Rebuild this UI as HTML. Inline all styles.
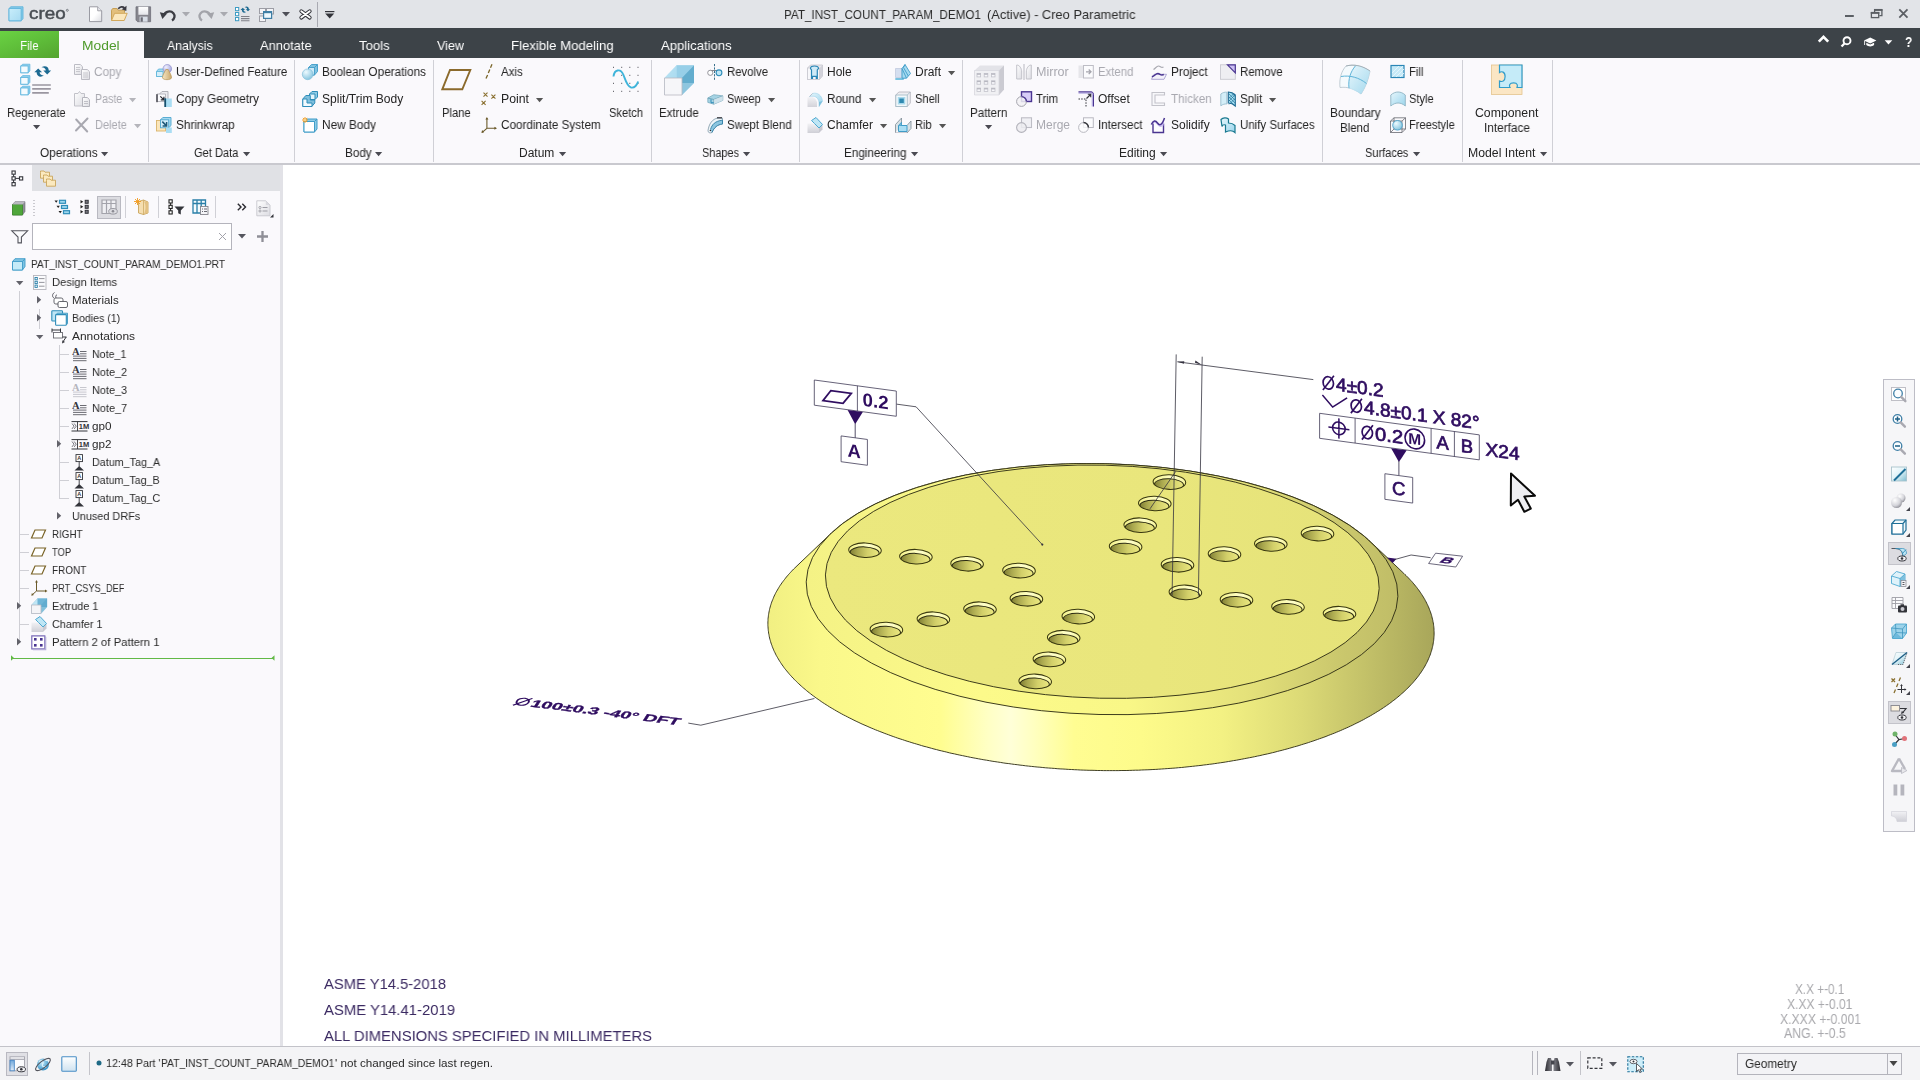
<!DOCTYPE html>
<html><head><meta charset="utf-8"><title>Creo Parametric</title>
<style>
html,body{margin:0;padding:0;}
body{width:1920px;height:1080px;position:relative;overflow:hidden;background:#ffffff;font-family:"Liberation Sans", sans-serif;}
.t{position:absolute;white-space:pre;line-height:20px;height:20px;transform-origin:0 50%;font-family:"Liberation Sans", sans-serif;will-change:transform;}
svg{overflow:visible}
</style></head><body>
<div style="position:absolute;left:0px;top:0px;width:1920px;height:28px;background:#e2e4e8;"></div>
<div style="position:absolute;left:0px;top:28px;width:1920px;height:30px;background:#3d4348;"></div>
<div style="position:absolute;left:0px;top:31px;width:59px;height:27px;background:linear-gradient(160deg,#6ad243 0%,#5fbf3a 45%,#54a42f 100%);"></div>
<div style="position:absolute;left:59px;top:31px;width:85px;height:27px;background:#faf9fc;"></div>
<div style="position:absolute;left:0px;top:58px;width:1920px;height:106px;background:#faf9fc;"></div>
<div style="position:absolute;left:0px;top:163px;width:1920px;height:2px;background:#c9c9cf;"></div>
<div style="position:absolute;left:0px;top:165px;width:280px;height:882px;background:#faf9fc;"></div>
<div style="position:absolute;left:0px;top:165px;width:280px;height:26px;background:#e0e1e5;"></div>
<div style="position:absolute;left:0px;top:165px;width:32px;height:26px;background:#faf9fc;"></div>
<div style="position:absolute;left:280px;top:165px;width:3px;height:882px;background:#e2e2e7;"></div>
<div style="position:absolute;left:283px;top:165px;width:1637px;height:882px;background:#ffffff;"></div>
<div style="position:absolute;left:0px;top:1047px;width:1920px;height:33px;background:#f4f4f6;"></div>
<div style="position:absolute;left:0px;top:1046px;width:1920px;height:1.2px;background:#c3c3c9;"></div>
<svg style="position:absolute;left:66px;top:9px;" width="3" height="3" viewBox="0 0 3 3"><circle cx="1.3" cy="1.3" r="1" fill="none" stroke="#5a5f65" stroke-width="0.7"/></svg>
<svg style="position:absolute;left:1840px;top:6px;" width="70" height="18" viewBox="0 0 70 18"><path d="M5 10h8.800" stroke="#5b5f64" stroke-width="2"/>
<path d="M34.600 6.600v-2.800h7.300v5.800h-2.600" fill="none" stroke="#5b5f64" stroke-width="1.300"/><path d="M34 3.900h8.500" stroke="#5b5f64" stroke-width="1.900"/>
<rect x="31.400" y="6.600" width="7.300" height="5" fill="none" stroke="#5b5f64" stroke-width="1.300"/><path d="M30.800 6.900h8.500" stroke="#5b5f64" stroke-width="1.900"/>
<path d="M59.300 3.400l8.200 8.200M67.500 3.400l-8.200 8.200" stroke="#5b5f64" stroke-width="1.800"/></svg>
<svg style="position:absolute;left:1810px;top:32px;" width="110" height="22" viewBox="0 0 110 22"><path d="M8.800 9.600l4.700-4.700 4.700 4.700" fill="none" stroke="#fff" stroke-width="2.700"/>
<circle cx="37" cy="8.700" r="3.500" fill="none" stroke="#fff" stroke-width="1.900"/><path d="M34.700 11.300l-3.200 3.200" stroke="#fff" stroke-width="2.300"/>
<path d="M54 8.500l6.200-2.900 6.200 2.900-6.200 2.900z" fill="#fff"/><path d="M56.300 10.800v2.300c1.900 1.700 5.900 1.700 7.800 0v-2.300l-3.900 1.800z" fill="#fff"/><path d="M54.600 8.800v4.200" stroke="#fff" stroke-width="0.900"/>
<path d="M74.700 8.200h7.600l-3.800 4.200z" fill="#fff"/></svg>
<svg style="position:absolute;left:8px;top:6px;" width="17" height="17" viewBox="0 0 17 17"><defs><linearGradient id="cub" x1="0" y1="0" x2="1" y2="1"><stop offset="0" stop-color="#c9eefb"/><stop offset="1" stop-color="#a6daf1"/></linearGradient></defs>
<path d="M1 2.500L2.900 0.800H15v11.800L13.200 14.800H1z" fill="#86cbe9" stroke="#5fb4db" stroke-width="0.900"/>
<path d="M1 2.500h12.200v12.300H1z" fill="url(#cub)" stroke="#62b6dc" stroke-width="0.900"/></svg>
<svg style="position:absolute;left:88px;top:6px;" width="16" height="17" viewBox="0 0 16 17"><defs><linearGradient id="pg" x1="0" y1="0" x2="1" y2="1"><stop offset="0.5" stop-color="#ffffff"/><stop offset="1" stop-color="#dcdde2"/></linearGradient></defs>
<path d="M1.5 0.8h8.2l4 4v10.8H1.5z" fill="url(#pg)" stroke="#9a9ba3" stroke-width="1"/>
<path d="M9.7 0.8v4h4" fill="#e9e9ee" stroke="#9a9ba3" stroke-width="0.9"/></svg>
<svg style="position:absolute;left:110px;top:5px;" width="19" height="18" viewBox="0 0 19 18"><path d="M1.5 15.5V5.2l1.2-1.7h4.2l1.2 1.7h6.4v2.6" fill="#e3bf7c" stroke="#c79f55" stroke-width="1"/>
<path d="M1.5 15.5L4.6 8.3h12.6l-3 7.2z" fill="#fbe7bd" stroke="#d2a85b" stroke-width="1"/>
<path d="M8.2 3.8c2-2.4 4.6-2.6 6.3-0.9" fill="none" stroke="#3a3a42" stroke-width="1.7"/>
<path d="M16.6 0.8l-0.3 5.2-4.6-1.7z" fill="#3a3a42"/></svg>
<svg style="position:absolute;left:135px;top:6px;" width="17" height="17" viewBox="0 0 17 17"><defs><linearGradient id="fl" x1="0" y1="0" x2="0" y2="1"><stop offset="0" stop-color="#ffffff"/><stop offset="1" stop-color="#e4e5ea"/></linearGradient></defs>
<path d="M1 0.8h14.6v14.9H2.6L1 14.1z" fill="#85858d" stroke="#6f6f78" stroke-width="0.8"/>
<rect x="3.4" y="0.8" width="9.8" height="8" fill="url(#fl)"/>
<rect x="4.6" y="10.6" width="8" height="5.1" fill="#d7dde6"/>
<rect x="5.6" y="11.3" width="2.2" height="4.4" fill="#6a6a74"/></svg>
<svg style="position:absolute;left:159px;top:8px;" width="18" height="14" viewBox="0 0 18 14"><path d="M4.2 7.6C6.5 3 11.8 2.2 14.4 5.2c2 2.3 1.3 5.6-1.4 7.2" fill="none" stroke="#3c3d44" stroke-width="2.3"/>
<path d="M0.8 4.2l7.2 1.6-4.6 5.2z" fill="#3c3d44"/></svg>
<svg style="position:absolute;left:181.5px;top:12px;" width="8" height="5" viewBox="0 0 8 5"><path d="M0 0h8L4 4.6z" fill="#a9aab0"/></svg>
<svg style="position:absolute;left:197px;top:8px;" width="18" height="14" viewBox="0 0 18 14"><path d="M13.8 7.6C11.5 3 6.2 2.2 3.6 5.2c-2 2.3-1.3 5.6 1.4 7.2" fill="none" stroke="#a3a4aa" stroke-width="2.3"/>
<path d="M17.2 4.2l-7.2 1.6 4.6 5.2z" fill="#a3a4aa"/></svg>
<svg style="position:absolute;left:219.5px;top:12px;" width="8" height="5" viewBox="0 0 8 5"><path d="M0 0h8L4 4.6z" fill="#a9aab0"/></svg>
<svg style="position:absolute;left:234px;top:5px;" width="17" height="17" viewBox="0 0 17 17"><g fill="#fff" stroke="#3e9cc4" stroke-width="1"><rect x="1.500" y="2.500" width="3.200" height="3.200"/><rect x="1.500" y="7.500" width="3.200" height="3.200"/><rect x="1.500" y="12.500" width="3.200" height="3.200"/></g>
<path d="M7 11.500h8.500M7 13.600h8.500M7 15.700h8.500" stroke="#808088" stroke-width="1.100"/>
<g transform="translate(-1.800 0.300) scale(0.580)"><path d="M21.500 3.300C24.500 1 28.800 2.200 28.800 6.600h2.300l-3.900 3.800-3.900-3.800h2.500c0-1.900-1.700-3.300-4.300-3.300z" fill="#1d6a92"/>
<path transform="rotate(180 22.700 7.400)" d="M21.500 3.300C24.500 1 28.800 2.200 28.800 6.600h2.300l-3.900 3.800-3.900-3.800h2.500c0-1.900-1.700-3.300-4.300-3.300z" fill="#1d6a92"/></g></svg>
<svg style="position:absolute;left:258px;top:7px;" width="18" height="16" viewBox="0 0 18 16"><g fill="#f4f4f7" stroke="#9c9da5" stroke-width="1"><rect x="8.5" y="1.5" width="7" height="5.5"/><rect x="1.5" y="1.5" width="6" height="5"/><rect x="1.5" y="9" width="6" height="5.5"/></g>
<rect x="5.6" y="4.6" width="8" height="6.8" fill="#eef8fd" stroke="#3f7fa6" stroke-width="1.2"/><rect x="5.6" y="4.6" width="8" height="1.6" fill="#3f7fa6"/></svg>
<svg style="position:absolute;left:281.5px;top:12px;" width="8" height="5" viewBox="0 0 8 5"><path d="M0 0h8L4 4.6z" fill="#4e4f57"/></svg>
<svg style="position:absolute;left:299px;top:9px;" width="13" height="11" viewBox="0 0 13 11"><path d="M2.300 2.200l8.400 6.400M10.700 2.200l-8.400 6.400" stroke="#33343a" stroke-width="3.900" stroke-linecap="round"/>
<path d="M2.300 2.200l8.400 6.400M10.700 2.200l-8.400 6.400" stroke="#ffffff" stroke-width="1.900" stroke-linecap="round"/></svg>
<div style="position:absolute;left:317px;top:2px;width:1px;height:25px;background:#a9aab2;"></div>
<svg style="position:absolute;left:324.5px;top:10.5px;" width="10" height="8" viewBox="0 0 10 8"><path d="M0 0.6h9.4" stroke="#33343a" stroke-width="1.2"/><path d="M0.2 2.6h9L4.7 7.6z" fill="#33343a"/></svg>
<div style="position:absolute;left:147.8px;top:60px;width:1px;height:102px;background:#d0d0d6;"></div>
<div style="position:absolute;left:294px;top:60px;width:1px;height:102px;background:#d0d0d6;"></div>
<div style="position:absolute;left:432.8px;top:60px;width:1px;height:102px;background:#d0d0d6;"></div>
<div style="position:absolute;left:651.3px;top:60px;width:1px;height:102px;background:#d0d0d6;"></div>
<div style="position:absolute;left:799.2px;top:60px;width:1px;height:102px;background:#d0d0d6;"></div>
<div style="position:absolute;left:961.8px;top:60px;width:1px;height:102px;background:#d0d0d6;"></div>
<div style="position:absolute;left:1322.2px;top:60px;width:1px;height:102px;background:#d0d0d6;"></div>
<div style="position:absolute;left:1462.2px;top:60px;width:1px;height:102px;background:#d0d0d6;"></div>
<div style="position:absolute;left:1552.2px;top:60px;width:1px;height:102px;background:#d0d0d6;"></div>
<svg style="position:absolute;left:100.7px;top:151.5px;" width="7.2" height="4.4" viewBox="0 0 7.2 4.4"><path d="M0 0h7.200L3.600 4.300z" fill="#4a4a52"/></svg>
<svg style="position:absolute;left:242.70000000000002px;top:151.5px;" width="7.2" height="4.4" viewBox="0 0 7.2 4.4"><path d="M0 0h7.200L3.600 4.300z" fill="#4a4a52"/></svg>
<svg style="position:absolute;left:375.4px;top:151.5px;" width="7.2" height="4.4" viewBox="0 0 7.2 4.4"><path d="M0 0h7.200L3.600 4.300z" fill="#4a4a52"/></svg>
<svg style="position:absolute;left:558.6999999999999px;top:151.5px;" width="7.2" height="4.4" viewBox="0 0 7.2 4.4"><path d="M0 0h7.200L3.600 4.300z" fill="#4a4a52"/></svg>
<svg style="position:absolute;left:742.6999999999999px;top:151.5px;" width="7.2" height="4.4" viewBox="0 0 7.2 4.4"><path d="M0 0h7.200L3.600 4.300z" fill="#4a4a52"/></svg>
<svg style="position:absolute;left:910.6999999999999px;top:151.5px;" width="7.2" height="4.4" viewBox="0 0 7.2 4.4"><path d="M0 0h7.200L3.600 4.300z" fill="#4a4a52"/></svg>
<svg style="position:absolute;left:1159.7px;top:151.5px;" width="7.2" height="4.4" viewBox="0 0 7.2 4.4"><path d="M0 0h7.200L3.600 4.300z" fill="#4a4a52"/></svg>
<svg style="position:absolute;left:1412.7px;top:151.5px;" width="7.2" height="4.4" viewBox="0 0 7.2 4.4"><path d="M0 0h7.200L3.600 4.300z" fill="#4a4a52"/></svg>
<svg style="position:absolute;left:1539.7px;top:151.5px;" width="7.2" height="4.4" viewBox="0 0 7.2 4.4"><path d="M0 0h7.200L3.600 4.300z" fill="#4a4a52"/></svg>
<svg style="position:absolute;left:32.9px;top:125.1px;" width="7.2" height="4.4" viewBox="0 0 7.2 4.4"><path d="M0 0h7.200L3.600 4.300z" fill="#4a4a52"/></svg>
<svg style="position:absolute;left:128.8px;top:97.8px;" width="7.2" height="4.4" viewBox="0 0 7.2 4.4"><path d="M0 0h7.200L3.600 4.300z" fill="#b5b5bb"/></svg>
<svg style="position:absolute;left:133.9px;top:123.8px;" width="7.2" height="4.4" viewBox="0 0 7.2 4.4"><path d="M0 0h7.200L3.600 4.300z" fill="#b5b5bb"/></svg>
<svg style="position:absolute;left:535.6999999999999px;top:97.8px;" width="7.2" height="4.4" viewBox="0 0 7.2 4.4"><path d="M0 0h7.200L3.600 4.300z" fill="#555"/></svg>
<svg style="position:absolute;left:768.1px;top:97.8px;" width="7.2" height="4.4" viewBox="0 0 7.2 4.4"><path d="M0 0h7.200L3.600 4.300z" fill="#555"/></svg>
<svg style="position:absolute;left:868.6999999999999px;top:97.8px;" width="7.2" height="4.4" viewBox="0 0 7.2 4.4"><path d="M0 0h7.200L3.600 4.300z" fill="#555"/></svg>
<svg style="position:absolute;left:880.1px;top:123.8px;" width="7.2" height="4.4" viewBox="0 0 7.2 4.4"><path d="M0 0h7.200L3.600 4.300z" fill="#555"/></svg>
<svg style="position:absolute;left:947.6999999999999px;top:70.8px;" width="7.2" height="4.4" viewBox="0 0 7.2 4.4"><path d="M0 0h7.200L3.600 4.300z" fill="#555"/></svg>
<svg style="position:absolute;left:938.6999999999999px;top:123.8px;" width="7.2" height="4.4" viewBox="0 0 7.2 4.4"><path d="M0 0h7.200L3.600 4.300z" fill="#555"/></svg>
<svg style="position:absolute;left:984.6999999999999px;top:125.1px;" width="7.2" height="4.4" viewBox="0 0 7.2 4.4"><path d="M0 0h7.200L3.600 4.300z" fill="#4a4a52"/></svg>
<svg style="position:absolute;left:1269.4px;top:97.8px;" width="7.2" height="4.4" viewBox="0 0 7.2 4.4"><path d="M0 0h7.200L3.600 4.300z" fill="#555"/></svg>
<svg style="position:absolute;left:0px;top:0px;" width="0" height="0" viewBox="0 0 0 0"><defs>
<linearGradient id="gb1" x1="0" y1="0" x2="1" y2="1"><stop offset="0" stop-color="#e6f6fc"/><stop offset="1" stop-color="#9bd5ec"/></linearGradient>
<linearGradient id="gb2" x1="0" y1="0" x2="0" y2="1"><stop offset="0" stop-color="#d9f1fb"/><stop offset="1" stop-color="#7fc4e2"/></linearGradient>
<linearGradient id="gg1" x1="0" y1="0" x2="1" y2="1"><stop offset="0" stop-color="#ffffff"/><stop offset="1" stop-color="#dcdce2"/></linearGradient>
<linearGradient id="gg2" x1="0" y1="0" x2="0" y2="1"><stop offset="0" stop-color="#f2f2f5"/><stop offset="1" stop-color="#cfcfd6"/></linearGradient>
<radialGradient id="gs1" cx="0.35" cy="0.3" r="0.8"><stop offset="0" stop-color="#eefaff"/><stop offset="1" stop-color="#7cc0dc"/></radialGradient>
<radialGradient id="gs2" cx="0.35" cy="0.3" r="0.8"><stop offset="0" stop-color="#f0f0ff"/><stop offset="1" stop-color="#9a9ad8"/></radialGradient>
<linearGradient id="gt1" x1="0" y1="0" x2="1" y2="0"><stop offset="0" stop-color="#f7e6c4"/><stop offset="1" stop-color="#c9a86c"/></linearGradient>
</defs></svg>
<svg style="position:absolute;left:20px;top:64px;" width="32" height="32" viewBox="0 0 32 32"><path d="M0.800 2l1.800 -1.800h7.300v6.800l-1.800 1.800h-7.300z" fill="#8fd0ec" stroke="#58b2dc" stroke-width="0.700"/><rect x="0.800" y="2" width="7.300" height="6.800" fill="#f4fbfe" stroke="#58b2dc" stroke-width="0.800"/><path d="M0.800 13.4l1.800 -1.800h7.300v6.800l-1.800 1.800h-7.300z" fill="#8fd0ec" stroke="#58b2dc" stroke-width="0.700"/><rect x="0.800" y="13.4" width="7.300" height="6.800" fill="#f4fbfe" stroke="#58b2dc" stroke-width="0.800"/><path d="M0.800 24l1.800 -1.800h7.300v6.800l-1.800 1.800h-7.300z" fill="#8fd0ec" stroke="#58b2dc" stroke-width="0.700"/><rect x="0.800" y="24" width="7.300" height="6.800" fill="#f4fbfe" stroke="#58b2dc" stroke-width="0.800"/>
<path d="M12.200 21h18.600M12.200 24.900h18.600M12.200 28.800h16.600" stroke="#9a96a0" stroke-width="1.700"/>
<path d="M21.500 3.300C24.500 1 28.800 2.200 28.800 6.600h2.300l-3.900 3.800-3.900-3.800h2.500c0-1.900-1.700-3.300-4.300-3.300z" fill="#1d6a92"/>
<path transform="rotate(180 22.700 7.400)" d="M21.500 3.300C24.500 1 28.800 2.200 28.800 6.600h2.300l-3.900 3.800-3.900-3.800h2.500c0-1.900-1.700-3.300-4.300-3.300z" fill="#1d6a92"/></svg>
<svg style="position:absolute;left:74px;top:63.7px;" width="16" height="16" viewBox="0 0 16 16"><g fill="url(#gg1)" stroke="#bcbcc4" stroke-width="1"><path d="M0.5 0.5h5.8l2.2 2.2v7.8h-8z"/><path d="M7.5 5.5h5.8l2.2 2.2v7.8h-8z"/></g>
<path d="M2 3.5h4M2 5.5h4M2 7.5h4M9 9h5M9 11h5M9 13h5" stroke="#c8c8ce" stroke-width="1"/></svg>
<svg style="position:absolute;left:74px;top:90.7px;" width="16" height="16" viewBox="0 0 16 16"><path d="M0.5 2.5h3.5l1.5-2 1.5 2h3.500v12.500h-10z" fill="url(#gg1)" stroke="#c2c2c9" stroke-width="1"/>
<path d="M8.500 6.500h4.800l2.200 2.200v6.800h-7z" fill="url(#gg1)" stroke="#b4b4bc" stroke-width="1"/><path d="M10 10.500h4M10 12.500h4" stroke="#c0c0c7" stroke-width="1"/></svg>
<svg style="position:absolute;left:75px;top:116.7px;" width="14" height="16" viewBox="0 0 14 16"><path d="M1.200 2.500l11 12M12.500 1.500l-11.500 12" stroke="#a8a8b0" stroke-width="2" stroke-linecap="round"/></svg>
<svg style="position:absolute;left:155.5px;top:63.7px;" width="16" height="16" viewBox="0 0 16 16"><path d="M0.500 7.500l2-2.500h6.500v5l-2 2.500h-6.500z" fill="#a5daf0" stroke="#5ab2d8" stroke-width="0.8"/><path d="M0.500 7.500h6.500v5h-6.500z" fill="#d5eefa" stroke="#5ab2d8" stroke-width="0.8"/>
<circle cx="11.300" cy="4.800" r="4.300" fill="url(#gs2)" stroke="#8484c4" stroke-width="0.600"/>
<path d="M9.800 5.500c-1.300 2.800-3.600 6.200-3.300 8.500 1 2.200 8 2.200 9 0 0.300-2.300-2-5.700-3.300-8.500z" fill="url(#gt1)" stroke="#b89452" stroke-width="0.700"/></svg>
<svg style="position:absolute;left:155.5px;top:90.7px;" width="16" height="16" viewBox="0 0 16 16"><path d="M3.500 3l2.500-2.500h6v7.500l-2.500 2.500" fill="#ececf0" stroke="#a9a9b1" stroke-width="0.9"/><path d="M1 3h8.500v7.500h-8.500z" fill="#fbfbfd" stroke="#b2b2ba" stroke-width="0.9"/>
<rect x="0.300" y="3.200" width="1.400" height="8" fill="#3e3e46"/>
<path d="M4.300 5.300l3.400 3.400M7.900 5.800v3.100h-3.100" stroke="#2a2a32" stroke-width="1.200" fill="none"/>
<rect x="9.800" y="7.500" width="6" height="8.500" fill="#a9ddf3"/><rect x="8.300" y="7.300" width="1.800" height="8.700" fill="#17506e"/></svg>
<svg style="position:absolute;left:155.5px;top:116.7px;" width="16" height="16" viewBox="0 0 16 16"><rect x="0.500" y="3.500" width="9" height="10.500" fill="#fbe6bb" stroke="#d9b36b" stroke-width="0.900"/>
<path d="M4.500 2.800l2.300-2.300h8.200v8l-2.300 2.300" fill="#a5daf0" stroke="#4ea6cf" stroke-width="0.900"/><rect x="4.500" y="2.800" width="8.200" height="8" fill="#d3eefa" stroke="#4ea6cf" stroke-width="0.900"/>
<path d="M6.300 4.600l4 4M10.600 5v4h-4" stroke="#1d5878" stroke-width="1.500" fill="none"/>
<rect x="10" y="10.500" width="5.800" height="5.500" fill="#a9ddf3"/></svg>
<svg style="position:absolute;left:302px;top:63.7px;" width="16" height="16" viewBox="0 0 16 16"><path d="M6.500 3.500l3-3h6v7l-3 3.500h-6z" fill="#7fc2e0" stroke="#3f9cc8" stroke-width="0.900"/><path d="M6.500 3.500h6v7.500h-6z" fill="#cfeaf7" stroke="#3f9cc8" stroke-width="0.900"/><path d="M12.500 3.500l3-3" stroke="#3f9cc8" stroke-width="0.900"/>
<circle cx="5.700" cy="10.300" r="5.400" fill="url(#gs1)" stroke="#7ab9d6" stroke-width="0.600"/></svg>
<svg style="position:absolute;left:302px;top:90.7px;" width="16" height="16" viewBox="0 0 16 16"><path d="M7.500 3l2.500-2.500h5.500v5.500l-2.500 2.500h-5.500z" fill="#8ecbe6" stroke="#2f8db9" stroke-width="1"/><path d="M7.500 3h5.500v5.500h-5.500z" fill="#e4f5fc" stroke="#2f8db9" stroke-width="1"/>
<path d="M0.800 8l3-3.500h4.500v4.500h4.500v3l-3 3.500h-9z" fill="#7fbfdc" stroke="#2f8db9" stroke-width="1"/>
<path d="M0.800 8h4.200v4h5v3.500h-9.200z" fill="#f2fafe" stroke="#2f8db9" stroke-width="1"/></svg>
<svg style="position:absolute;left:302px;top:116.7px;" width="16" height="16" viewBox="0 0 16 16"><path d="M2 4.500l2.500-2.500h10.500v10l-2.500 3h-10.500z" fill="#8ecbe6" stroke="#3f9cc8" stroke-width="1"/><path d="M2 4.500h10.500v10.500h-10.500z" fill="#ffffff" stroke="#3f9cc8" stroke-width="1"/><path d="M12.500 4.500l2.500-2.500" stroke="#3f9cc8"/>
<path d="M3 0v6M0 3h6M0.900 0.900l4.200 4.200M5.100 0.900l-4.200 4.200" stroke="#f29a1e" stroke-width="0.900"/><circle cx="3" cy="3" r="1.300" fill="#fff3c9" stroke="#f29a1e" stroke-width="0.600"/></svg>
<svg style="position:absolute;left:441px;top:65px;" width="32" height="28" viewBox="0 0 32 28"><path d="M9 5h20.300l-8 19.300h-20z" fill="none" stroke="#8b6a2c" stroke-width="1.900" stroke-linejoin="miter"/></svg>
<svg style="position:absolute;left:481px;top:63.7px;" width="16" height="16" viewBox="0 0 16 16"><path d="M11 0.300l-1.500 3.400M8.800 5.600l-1.500 3.400M6.600 10.900l-1.600 3.600" stroke="#7a6428" stroke-width="1.300"/></svg>
<svg style="position:absolute;left:481px;top:90.7px;" width="16" height="16" viewBox="0 0 16 16"><g stroke="#8a7030" stroke-width="1.100"><path d="M2.500 1.700l4 4M6.500 1.700l-4 4M10.400 3.700l4 4M14.400 3.700l-4 4M0.600 9.800l4 4M4.600 9.800l-4 4"/></g></svg>
<svg style="position:absolute;left:481px;top:116.7px;" width="16" height="16" viewBox="0 0 16 16"><g stroke="#6b5a2a" stroke-width="1.100" fill="none"><path d="M5.900 1.500v9.800h9M5.900 11.300l-4.700 4"/></g><path d="M5.900 0l-1.500 2.600h3zM16 11.300l-2.600-1.500v3zM0.400 16l0.700-2.900 2 2.200z" fill="#6b5a2a"/></svg>
<svg style="position:absolute;left:610px;top:64px;" width="32" height="32" viewBox="0 0 32 32"><rect x="3.0" y="2.8" width="1" height="1" fill="#4a4a52"/><rect x="3.0" y="10.8" width="1" height="1" fill="#4a4a52"/><rect x="3.0" y="18.8" width="1" height="1" fill="#4a4a52"/><rect x="3.0" y="26.8" width="1" height="1" fill="#4a4a52"/><rect x="11.2" y="2.8" width="1" height="1" fill="#4a4a52"/><rect x="11.2" y="10.8" width="1" height="1" fill="#4a4a52"/><rect x="11.2" y="18.8" width="1" height="1" fill="#4a4a52"/><rect x="11.2" y="26.8" width="1" height="1" fill="#4a4a52"/><rect x="19.3" y="2.8" width="1" height="1" fill="#4a4a52"/><rect x="19.3" y="10.8" width="1" height="1" fill="#4a4a52"/><rect x="19.3" y="18.8" width="1" height="1" fill="#4a4a52"/><rect x="19.3" y="26.8" width="1" height="1" fill="#4a4a52"/><rect x="27.5" y="2.8" width="1" height="1" fill="#4a4a52"/><rect x="27.5" y="10.8" width="1" height="1" fill="#4a4a52"/><rect x="27.5" y="18.8" width="1" height="1" fill="#4a4a52"/><rect x="27.5" y="26.8" width="1" height="1" fill="#4a4a52"/><path d="M3.500 12.500c0.800-7 7-8.600 10 -1.500 2 5 3.500 11.500 7.600 12.500 3.500 0.700 6.200-2.700 7-6" fill="none" stroke="#3fb4da" stroke-width="1.900"/></svg>
<svg style="position:absolute;left:663px;top:64px;" width="32" height="32" viewBox="0 0 32 32"><path d="M1.500 14l12-12.500h17.500v17.500l-12 12h-17.500z" fill="#bfe6f5"/>
<path d="M13.500 1.500h17.500v17.500h-17.500z" fill="#6fb5d6"/><path d="M13.500 1.500v17.500l-12 12v-17z" fill="url(#gb1)"/>
<path d="M13.500 19h17.500l-12 12h-17.500z" fill="#cfeefa"/><path d="M13.500 1.500l17.500 0-12 12.500h-17.500z" fill="#a8daf0" opacity="0.7"/>
<path d="M19 14v17l12-12v-17.500z" fill="#5aa6c9" opacity="0.550"/>
<path d="M1.500 14h17.500v17h-17.500z" fill="#f6f6f9" stroke="#b9b9c1" stroke-width="0.800"/></svg>
<svg style="position:absolute;left:707px;top:63.7px;" width="16" height="16" viewBox="0 0 16 16"><path d="M7.500 0v16" stroke="#23607f" stroke-width="0.900" stroke-dasharray="2.200 1.200"/><path d="M3 6.500h10" stroke="#6a6a72" stroke-width="0.800"/>
<circle cx="3.300" cy="8.800" r="2.600" fill="#fff" stroke="#8a8a92" stroke-width="0.900"/><circle cx="12" cy="8.800" r="2.900" fill="#bfe6f5" stroke="#2f8db9" stroke-width="1.100"/></svg>
<svg style="position:absolute;left:707px;top:90.7px;" width="16" height="16" viewBox="0 0 16 16"><path d="M0.800 7l6-3.300 9 1.200v4.500l-9 3.800-6-1.800z" fill="#a5d3e4" stroke="#6fa3b8" stroke-width="0.700"/><path d="M0.800 7l6 1.500 9-3.600M6.800 8.500v4.700" stroke="#5b93aa" stroke-width="0.700" fill="none"/>
<path d="M4 8.300v3.400h3.200" stroke="#2f8db9" fill="none" stroke-width="1"/><path d="M6.800 8.500l9-3.600v4.500l-9 3.800z" fill="#d9e6ec" opacity="0.800"/></svg>
<svg style="position:absolute;left:707px;top:116.7px;" width="16" height="16" viewBox="0 0 16 16"><path d="M1 13.500c1-6.500 4-11.500 10-12.500l4.500 0.200v5.800c-5 0.500-8.500 3.500-10.500 8.500-2 1-4.300 0-4-2z" fill="#eef5f9" stroke="#7d97a6" stroke-width="0.800"/>
<path d="M3.500 12.500c1.500-5 4.500-8.500 12-9.300v3.800c-5 0.500-8.500 3.500-10.500 8.500" fill="#8cc6e0" stroke="#2f7fa6" stroke-width="0.900"/><circle cx="3.400" cy="13.500" r="0.800" fill="#33343a"/><path d="M10 0.800h5" stroke="#33343a" stroke-width="1.200"/></svg>
<svg style="position:absolute;left:807px;top:63.7px;" width="16" height="16" viewBox="0 0 16 16"><path d="M0.500 4l3-3h12v11l-3 3.500h-12z" fill="#e9e9ee" stroke="#bdbdc6" stroke-width="0.700"/><path d="M12.500 4.300l3-3.300v11l-3 3.500z" fill="#d2d2da"/><path d="M0.500 4h12v11.500h-12z" fill="#f7f7fa" stroke="#c4c4cc" stroke-width="0.700"/>
<path d="M3.500 4.500c0-2 1.500-2.500 4-2.500s4 0.500 4 2.500l-1.200 1.500v8.500h-1v-2.200h-3.800v2.200h-1v-8.500z" fill="#cfeaf7" stroke="#2a86b6" stroke-width="1.200"/></svg>
<svg style="position:absolute;left:807px;top:90.7px;" width="16" height="16" viewBox="0 0 16 16"><path d="M0.500 6.500c4-1.500 7.500-0.500 9.500 4.500v5h-9.500z" fill="url(#gg2)" opacity="0.900"/>
<path d="M5.500 2.500c5-1.500 9.500 2 10 7.500l-3.500 5.500v-4.500c-1-5-4-6.500-9.500-5.500z" fill="url(#gb1)" stroke="#8ecbe6" stroke-width="0.500"/><path d="M12 11v4.500l3.500-5.500" fill="#7fc0de"/><path d="M5.500 2.500l-3 3" stroke="#b5b5bd" stroke-width="0.700"/></svg>
<svg style="position:absolute;left:807px;top:116.7px;" width="16" height="16" viewBox="0 0 16 16"><path d="M0.500 6.500h7l4.500 4.500v5h-11.500z" fill="url(#gg2)"/><path d="M12 11l3.500-3.500v5l-3.500 3.500z" fill="#c9c9d1"/>
<path d="M4.500 3.500l4.500-3 6.500 7-3.500 3.500-4.500-4.500z" fill="#bfe6f5" stroke="#4fa9d1" stroke-width="1"/></svg>
<svg style="position:absolute;left:895px;top:63.7px;" width="16" height="16" viewBox="0 0 16 16"><path d="M0.500 4.500h6.500v9h-6.500z" fill="#d5dff0" stroke="#b5bfd6" stroke-width="0.600"/><path d="M0.300 14.200h9l-0.700 1.500h-8.300z" fill="#4fb0d8"/>
<path d="M7 4.500l3-4 5.500 9-4 4.700h-4.500z" fill="#a5daf0" stroke="#3f9cc8" stroke-width="0.900"/><path d="M7 4.500l4.500 9.700M10 0.500l-1.500 3 4.800 8.500" stroke="#3f9cc8" stroke-width="0.900" fill="none"/></svg>
<svg style="position:absolute;left:895px;top:90.7px;" width="16" height="16" viewBox="0 0 16 16"><path d="M0.800 4l3-3h11.500v11l-3 3.500h-11.500z" fill="#eeeef2" stroke="#b1b1ba" stroke-width="0.800"/><path d="M0.800 4h11.500v11.500h-11.500zM12.300 4l3-3" fill="#f3f8fb" stroke="#9fb7c4" stroke-width="0.800"/>
<rect x="2.800" y="6" width="7.500" height="7.500" fill="#a9d9ec"/><rect x="4.300" y="7.500" width="4.500" height="4.500" fill="#2f89b1"/></svg>
<svg style="position:absolute;left:895px;top:116.7px;" width="16" height="16" viewBox="0 0 16 16"><path d="M0.500 15.500v-8l6-6.500v7.500M6.500 8.500h5.500l4-4.500v7.500l-4 4.500" fill="#d9e1e6" stroke="#7c8a94" stroke-width="0.800"/><path d="M0.500 15.500h11.500" stroke="#8a8a94" stroke-dasharray="1 1" stroke-width="0.800"/>
<path d="M3.500 8.500h8.500v6h-8.500z" fill="#a9ddf3" stroke="#3f9cc8" stroke-width="1"/><path d="M3.500 8.500l3-3.300v3.300" fill="#6fb5d6" stroke="#3f9cc8" stroke-width="0.800"/></svg>
<svg style="position:absolute;left:973px;top:64px;" width="32" height="32" viewBox="0 0 32 32"><path d="M1.500 6.500l5.500-5h24v24l-5 5.500h-24.500z" fill="#e3e3e8"/><path d="M26 6.500l5-5v24l-5 5.500z" fill="#cbcbd2"/>
<path d="M1.500 6.500h24.500v24.500h-24.500z" fill="#f0f0f3" stroke="#d6d6dc" stroke-width="0.700"/><rect x="4.0" y="9.5" width="3.600" height="3.400" fill="#f7f7fa" stroke="#c2c2ca" stroke-width="0.800"/><path d="M4.0 9.5h3.600v1.300h-3.600z" fill="#b7b7c0"/><rect x="4.0" y="16.8" width="3.600" height="3.400" fill="#f7f7fa" stroke="#c2c2ca" stroke-width="0.800"/><path d="M4.0 16.8h3.600v1.300h-3.600z" fill="#b7b7c0"/><rect x="4.0" y="24.1" width="3.600" height="3.400" fill="#f7f7fa" stroke="#c2c2ca" stroke-width="0.800"/><path d="M4.0 24.1h3.600v1.300h-3.600z" fill="#b7b7c0"/><rect x="11.2" y="9.5" width="3.600" height="3.400" fill="#f7f7fa" stroke="#c2c2ca" stroke-width="0.800"/><path d="M11.2 9.5h3.600v1.300h-3.600z" fill="#b7b7c0"/><rect x="11.2" y="16.8" width="3.600" height="3.400" fill="#f7f7fa" stroke="#c2c2ca" stroke-width="0.800"/><path d="M11.2 16.8h3.600v1.300h-3.600z" fill="#b7b7c0"/><rect x="11.2" y="24.1" width="3.600" height="3.400" fill="#f7f7fa" stroke="#c2c2ca" stroke-width="0.800"/><path d="M11.2 24.1h3.600v1.300h-3.600z" fill="#b7b7c0"/><rect x="18.4" y="9.5" width="3.600" height="3.400" fill="#f7f7fa" stroke="#c2c2ca" stroke-width="0.800"/><path d="M18.4 9.5h3.600v1.300h-3.600z" fill="#b7b7c0"/><rect x="18.4" y="16.8" width="3.600" height="3.400" fill="#f7f7fa" stroke="#c2c2ca" stroke-width="0.800"/><path d="M18.4 16.8h3.600v1.300h-3.600z" fill="#b7b7c0"/><rect x="18.4" y="24.1" width="3.600" height="3.400" fill="#f7f7fa" stroke="#c2c2ca" stroke-width="0.800"/><path d="M18.4 24.1h3.600v1.300h-3.600z" fill="#b7b7c0"/></svg>
<svg style="position:absolute;left:1016px;top:63.7px;" width="16" height="16" viewBox="0 0 16 16"><path d="M0.700 15v-14c3 0 5 3.500 5 7v7z" fill="url(#gg1)" stroke="#c3c3ca" stroke-width="1"/><path d="M15.300 15v-14c-3 0-5 3.500-5 7v7z" fill="url(#gg1)" stroke="#c3c3ca" stroke-width="1"/><path d="M8 0v16" stroke="#b8b8c0" stroke-width="1"/></svg>
<svg style="position:absolute;left:1016px;top:90.7px;" width="16" height="16" viewBox="0 0 16 16"><rect x="5.500" y="0.800" width="10" height="9.700" fill="#d7cdf7" stroke="#4a3591" stroke-width="1.400"/><circle cx="5.500" cy="10.500" r="4.900" fill="#f2f2f5" fill-opacity="0.850" stroke="#a5a5ad" stroke-width="1"/>
<path d="M5.500 5.600c2.700 0 4.900 2.200 4.900 4.900" stroke="#4a3591" stroke-width="1.400" fill="none"/></svg>
<svg style="position:absolute;left:1016px;top:116.7px;" width="16" height="16" viewBox="0 0 16 16"><rect x="5.500" y="0.800" width="10" height="9.700" fill="#f0f0f4" stroke="#bdbdc5" stroke-width="1.100"/><circle cx="5.500" cy="10.500" r="4.900" fill="#ececf0" fill-opacity="0.850" stroke="#b3b3bb" stroke-width="1.100"/></svg>
<svg style="position:absolute;left:1078px;top:63.7px;" width="16" height="16" viewBox="0 0 16 16"><rect x="0.500" y="1.500" width="5.500" height="12.500" fill="#e6e6ea"/><rect x="5.500" y="1.500" width="9.800" height="12.500" fill="#fbfbfd" stroke="#bdbdc5" stroke-width="1"/><path d="M8 7.800h4.500M10.700 5.500l2.300 2.300-2.300 2.300" stroke="#a5a5ad" stroke-width="1.300" fill="none"/></svg>
<svg style="position:absolute;left:1078px;top:90.7px;" width="16" height="16" viewBox="0 0 16 16"><path d="M0.500 0.800h12.500c1.500 0 2.500 1 2.500 2.500v12.200h-1.800v-11.500c0-0.800-0.500-1.200-1.200-1.200h-12z" fill="#b7aee0"/><path d="M0.500 0.800h12.500c1.500 0 2.500 1 2.500 2.500v12.200" stroke="#4a3591" stroke-width="1" fill="none"/>
<path d="M0.500 8h7.500v7.500" stroke="#33343a" stroke-width="1" stroke-dasharray="1.500 1.200" fill="none"/><path d="M8.500 7.500l4-4M9.800 3.300h2.900v2.900" stroke="#33343a" stroke-width="1.100" fill="none"/></svg>
<svg style="position:absolute;left:1078px;top:116.7px;" width="16" height="16" viewBox="0 0 16 16"><rect x="5.500" y="0.800" width="9.800" height="9.700" fill="#fbfbfd" stroke="#b9b9c1" stroke-width="1"/><circle cx="5.500" cy="10.500" r="4.900" fill="#fbfbfd" fill-opacity="0.800" stroke="#b9b9c1" stroke-width="1"/>
<path d="M5.500 5.600c2.700 0 4.900 2.200 4.900 4.900" stroke="#33343a" stroke-width="1.500" fill="none"/></svg>
<svg style="position:absolute;left:1151px;top:63.7px;" width="16" height="16" viewBox="0 0 16 16"><path d="M2.500 5.500c2-1 3-3.500 5-3.500s2.500 2.500 5 1" stroke="#a9a9b1" stroke-width="1.100" fill="none"/><path d="M0.500 15.300l2.500-5h12.500l-2.500 5z" fill="#f3f1fa" stroke="#a79fd0" stroke-width="0.900"/>
<path d="M0.800 12.500c2.500 0.500 3.500-3 6-3s2.500 2.500 6 1" stroke="#4a3591" stroke-width="1.500" fill="none"/></svg>
<svg style="position:absolute;left:1151px;top:90.7px;" width="16" height="16" viewBox="0 0 16 16"><path d="M1 1.500h12.500v2.500h-9.500v8h9.500v2.500h-12.500z" fill="#f7f7fa" stroke="#c3c3ca" stroke-width="1.100"/></svg>
<svg style="position:absolute;left:1151px;top:116.7px;" width="16" height="16" viewBox="0 0 16 16"><path d="M2 6.500v9h10.500v-9" fill="#fdfdff" stroke="#4a3591" stroke-width="1.400"/><path d="M0.500 6.500c2-3.500 4-3.500 6-0.500s4 2.500 6.500-2l-0.500 4.500c-2 2-4.500 2-6.500-1s-3.500-1.500-5.500-1z" fill="#cbbff2"/>
<path d="M0.300 7.500c2-4.500 4.200-4.500 6.200-1.500s4.500 2.500 7-5" stroke="#4a3591" stroke-width="1.500" fill="none"/></svg>
<svg style="position:absolute;left:1220px;top:63.7px;" width="16" height="16" viewBox="0 0 16 16"><rect x="0.500" y="0.800" width="14.800" height="14.500" fill="#eeeef2" stroke="#c9c9d0" stroke-width="0.900"/><path d="M7.500 0.800h7.800v8z" fill="#cbbff2" stroke="#4a3591" stroke-width="1.200"/></svg>
<svg style="position:absolute;left:1220px;top:90.7px;" width="16" height="16" viewBox="0 0 16 16"><path d="M0.800 3c2-1.500 4-2 6-1.800v11.800c-2-0.200-4 0.300-6 1.800z" fill="#d4eef8" stroke="#8fb8c9" stroke-width="0.800"/>
<path d="M8.300 1c2.500 0 5 1 7 3v11c-2-2-4.500-3-7-3z" fill="#9fdcf0" stroke="#1d6a92" stroke-width="1.100"/>
<path d="M9 3l6 6M9 6l6 6M9 9l5 5M12 2.500l3.300 3.300M15 4l-6 6M15 7.500l-6 6M14 2.500l-5 5" stroke="#1d6a92" stroke-width="0.600"/></svg>
<svg style="position:absolute;left:1220px;top:116.7px;" width="16" height="16" viewBox="0 0 16 16"><path d="M1 2.500c2-2 5.500-2 7.500-0.500v4c2 0 4.500 0.500 6.500 2.500v7c-2-2-6-2-9.500-0.500v-7c-1.500-0.500-3 0-3.500 1.500z" fill="url(#gb1)" stroke="#17788f" stroke-width="1.200"/></svg>
<svg style="position:absolute;left:1338px;top:64px;" width="32" height="32" viewBox="0 0 32 32"><path d="M2 23.500c-1-9 1.500-16.500 6-21.500 8-2 16-0.500 24 5-2 10-5 17-9 23-6-5-13-7.500-21-6.500z" fill="#f4fafd" stroke="#b5c3cb" stroke-width="0.800"/>
<path d="M17.500 1.800c-5 6-7.500 13-6.500 22.500 4.500 1.500 8.500 3.500 12 6 4-6 7-13 9-23-4.500-3.500-9.500-5.500-14.500-5.500z" fill="url(#gb1)" opacity="0.900"/>
<path d="M3 12.500c9-1.500 18 1 25.500 7M17.500 1.800c-5 6-7.500 13-6.500 22.500" stroke="#5fb4d8" stroke-width="1" fill="none"/><path d="M8 2c8-2 16-0.500 24 5" stroke="#9aa7af" stroke-width="0.800" fill="none"/></svg>
<svg style="position:absolute;left:1389.5px;top:63.7px;" width="16" height="16" viewBox="0 0 16 16"><rect x="1" y="1.500" width="13" height="12" fill="#c5e9f7" stroke="#2a86b6" stroke-width="1.200"/><path d="M2 9l7-7M2 13l11-11M6 13l8-8M10 13l4-4" stroke="#e6f6fc" stroke-width="0.900"/></svg>
<svg style="position:absolute;left:1389.5px;top:90.7px;" width="16" height="16" viewBox="0 0 16 16"><path d="M0.800 4c4.500-4 10-4 14.500 0v11c-4.500-4-10-4-14.500 0z" fill="url(#gb1)" stroke="#8fb3c3" stroke-width="0.900"/></svg>
<svg style="position:absolute;left:1389.5px;top:116.7px;" width="16" height="16" viewBox="0 0 16 16"><path d="M0.500 4l3.500-3.200h11.500v11.200l-3.500 3.500h-11.500zM0.500 4h11.500v11.500M12 4l3.500-3.200M4 0.800v11.200h11.500M4 12l-3.500 3.500" fill="none" stroke="#55565e" stroke-width="0.700"/>
<circle cx="7.500" cy="8.300" r="4.800" fill="url(#gs1)" stroke="#3f9cc8" stroke-width="0.800"/></svg>
<svg style="position:absolute;left:1491px;top:64px;" width="32" height="32" viewBox="0 0 32 32"><rect x="0.500" y="1" width="30.500" height="29.500" fill="#fbe6c4" stroke="#e3c48d" stroke-width="0.800"/>
<path d="M8.500 1h22.500v22.500h-5c0.600-1.600 1.100-4.600-3.400-4.600s-4.600 3-3.600 4.600h-10.500v-6.500c2.600 1.100 5.600 0.600 5.600-4.400s-3.500-5.600-5.600-4.100z" fill="#c5ebf8" stroke="#2f9ccb" stroke-width="1.200"/></svg>
<div style="position:absolute;left:11px;top:657.5px;width:263px;height:1.5px;background:#62b946;"></div>
<svg style="position:absolute;left:9px;top:654px;" width="270" height="8" viewBox="0 0 270 8"><path d="M2 1.2l3 2.8-3 2.8z M265.500 1.200l-3 2.800 3 2.800z" fill="#62b946"/></svg>
<div style="position:absolute;left:32px;top:223.4px;width:200px;height:26.2px;background:#ffffff;border:1px solid #b4b4bc;box-sizing:border-box;"></div>
<svg style="position:absolute;left:11px;top:169.5px;" width="14" height="17" viewBox="0 0 14 17"><g fill="#fff" stroke="#33343a" stroke-width="1.100"><rect x="1" y="1" width="3.200" height="3.200"/><rect x="1" y="6.800" width="3.200" height="3.200"/><rect x="1" y="12.600" width="3.200" height="3.200"/><rect x="8.500" y="6.800" width="3.200" height="3.200"/></g>
<path d="M2.600 4.200v2.600M2.600 10v2.600M4.200 8.400h4.300" stroke="#33343a" stroke-width="1"/></svg>
<svg style="position:absolute;left:39.5px;top:169.5px;" width="17" height="17" viewBox="0 0 17 17"><g fill="#fbe9bf" stroke="#c9a55c" stroke-width="0.900"><path d="M0.500 2.500v-1.500h3.500l1 1.200h4.500v6h-9z"/><path d="M3.500 6.500v-1.500h3.500l1 1.200h4.500v6h-9z"/><path d="M6.500 10.500v-1.500h3.500l1 1.200h4.500v6h-9z"/></g></svg>
<svg style="position:absolute;left:11.5px;top:201px;" width="14" height="15" viewBox="0 0 14 15"><path d="M0.500 3.500l2.500-2.800h10v9.800l-2.500 3.500h-10z" fill="#8d8d95" stroke="#6f6f77" stroke-width="0.600"/><path d="M0.500 3.500h10v10.500h-10z" fill="#4fa63a" stroke="#3b8a2a" stroke-width="0.800"/><path d="M0.500 3.500l2.500-2.800h10l-2.500 2.800z" fill="#b9b9c0"/></svg>
<svg style="position:absolute;left:32.5px;top:200px;" width="2" height="16" viewBox="0 0 2 16"><path d="M1 0v16" stroke="#9a9aa2" stroke-width="1" stroke-dasharray="1 2"/></svg>
<svg style="position:absolute;left:53px;top:199px;" width="17" height="16" viewBox="0 0 17 16"><g fill="#9fd8ef" stroke="#2f8db9" stroke-width="1.200"><rect x="6.500" y="1.300" width="6" height="3"/><rect x="8.500" y="6.500" width="6" height="3"/><rect x="10.500" y="11.700" width="6" height="3"/></g>
<path d="M1.500 1.500h3.400l-1.700 2.300zM3.500 6.800h3.400l-1.700 2.300zM5.500 12h3.400l-1.700 2.300z" fill="#222"/></svg>
<svg style="position:absolute;left:80px;top:199px;" width="10" height="16" viewBox="0 0 10 16"><path d="M0.500 1l2.800 1.800-2.800 1.800zM0.500 6l2.800 1.800-2.800 1.800zM0.500 11l2.800 1.800-2.800 1.800z" fill="#222"/><g fill="#77777f" stroke="#33343a" stroke-width="1"><rect x="5.200" y="1.300" width="3" height="3"/><rect x="5.200" y="6.300" width="3" height="3"/><rect x="5.200" y="11.300" width="3" height="3"/></g></svg>
<div style="position:absolute;left:97px;top:195.5px;width:24px;height:23px;background:#dcdce1;border:1px solid #b9b9c1;box-sizing:border-box;"></div>
<svg style="position:absolute;left:101px;top:199px;" width="17" height="17" viewBox="0 0 17 17"><path d="M1 1h14v13.500h-14zM1 4.500h14M5.500 1v13.500M10 1v13.500" fill="#efeff3" stroke="#a3a3ab" stroke-width="1.200"/>
<ellipse cx="12" cy="12.300" rx="4.300" ry="2.800" fill="#dcdce1" stroke="#9a9aa2" stroke-width="1"/><circle cx="12" cy="12.300" r="1.300" fill="#8a8a92"/></svg>
<div style="position:absolute;left:125px;top:196px;width:1px;height:22px;background:#d0d0d6;"></div>
<svg style="position:absolute;left:133.5px;top:198px;" width="16" height="18" viewBox="0 0 16 18"><path d="M4.500 3.500l5-1.500 4.500 2v11l-4.500 1.500-5-1.500z" fill="#f5deb0" stroke="#c9a55c" stroke-width="0.900"/><path d="M9.500 2v15" stroke="#c9a55c" stroke-width="0.700"/><path d="M10 3.500c2 3 2 8 0 12.500l4-1.200v-10.800z" fill="#e3c182"/>
<path d="M3.500 0v7M0 3.500h7M1 1l5 5M6 1l-5 5" stroke="#f29a1e" stroke-width="0.900"/></svg>
<div style="position:absolute;left:158px;top:196px;width:1px;height:22px;background:#d0d0d6;"></div>
<svg style="position:absolute;left:167.5px;top:199px;" width="17" height="16" viewBox="0 0 17 16"><g fill="#fff" stroke="#222" stroke-width="1.100"><rect x="1" y="0.800" width="3.200" height="3.200"/><rect x="1" y="6.300" width="3.200" height="3.200"/><rect x="1" y="11.800" width="3.200" height="3.200"/></g><path d="M2.600 4v2.300M2.600 9.500v2.300" stroke="#222"/>
<path d="M6.500 7.500h10l-3.700 4v4l-2.600-1.200v-2.800z" fill="#33343a"/></svg>
<svg style="position:absolute;left:191.5px;top:199px;" width="17" height="16" viewBox="0 0 17 16"><path d="M1 1h12.500v13h-12.500zM1 4.500h12.500M5 1v13M9.200 1v13" fill="#f4fbfe" stroke="#2a7fa8" stroke-width="1.300"/>
<rect x="8.500" y="7.500" width="7.500" height="8" fill="#f5f5f8" stroke="#85858d" stroke-width="0.900"/><path d="M10 10h1M12 10h3M10 12.500h1M12 12.500h3" stroke="#5a5a62" stroke-width="0.900"/></svg>
<div style="position:absolute;left:215px;top:196px;width:1px;height:22px;background:#d0d0d6;"></div>
<svg style="position:absolute;left:236.5px;top:202.5px;" width="10" height="8" viewBox="0 0 10 8"><path d="M0.800 0.800l3.200 3.200-3.200 3.200M5.300 0.800l3.200 3.200-3.200 3.200" fill="none" stroke="#2a2a30" stroke-width="1.400"/></svg>
<svg style="position:absolute;left:255.5px;top:199.5px;" width="18" height="18" viewBox="0 0 18 18"><path d="M0.800 0.800h9l4.200 4.200v10.800h-13.200z" fill="url(#gg1)" stroke="#c6c6cd" stroke-width="0.900"/><path d="M9.800 0.800v4.200h4.200z" fill="#d9d9df"/>
<circle cx="4" cy="7.500" r="1.100" fill="none" stroke="#8d8d95" stroke-width="0.700"/><circle cx="4" cy="11" r="1.100" fill="none" stroke="#8d8d95" stroke-width="0.700"/><path d="M6.500 7.500h5M6.500 11h5" stroke="#9d9da5" stroke-width="1"/>
<path d="M17.500 14v3.500h-3.500z" fill="#33343a"/></svg>
<svg style="position:absolute;left:11px;top:229.5px;" width="18" height="14" viewBox="0 0 18 14"><path d="M0.800 0.800h15.800l-6.200 6.300v5.800h-3.400v-5.800z" fill="#fbfbfd" stroke="#55565e" stroke-width="1.100"/></svg>
<svg style="position:absolute;left:217.5px;top:232px;" width="9" height="9" viewBox="0 0 9 9"><path d="M1 1l7 7M8 1l-7 7" stroke="#a2a2aa" stroke-width="1"/></svg>
<svg style="position:absolute;left:237.5px;top:233.5px;" width="8" height="5" viewBox="0 0 8 5"><path d="M0 0h8L4 4.600z" fill="#55565e"/></svg>
<svg style="position:absolute;left:257px;top:230.5px;" width="11" height="11" viewBox="0 0 11 11"><path d="M5.500 0v11M0 5.500h11" stroke="#8f8f97" stroke-width="2.300"/></svg>
<div style="position:absolute;left:19px;top:291px;width:1px;height:352px;background:#cfcfd5;"></div>
<div style="position:absolute;left:59px;top:345px;width:1px;height:154px;background:#cfcfd5;"></div>
<div style="position:absolute;left:39px;top:309px;width:1px;height:20px;background:#cfcfd5;"></div>
<div style="position:absolute;left:19.5px;top:534px;width:9px;height:1px;background:#cfcfd5;"></div>
<div style="position:absolute;left:19.5px;top:552px;width:9px;height:1px;background:#cfcfd5;"></div>
<div style="position:absolute;left:19.5px;top:570px;width:9px;height:1px;background:#cfcfd5;"></div>
<div style="position:absolute;left:19.5px;top:588px;width:9px;height:1px;background:#cfcfd5;"></div>
<div style="position:absolute;left:19.5px;top:624px;width:9px;height:1px;background:#cfcfd5;"></div>
<div style="position:absolute;left:60px;top:354px;width:9px;height:1px;background:#cfcfd5;"></div>
<div style="position:absolute;left:60px;top:372px;width:9px;height:1px;background:#cfcfd5;"></div>
<div style="position:absolute;left:60px;top:390px;width:9px;height:1px;background:#cfcfd5;"></div>
<div style="position:absolute;left:60px;top:408px;width:9px;height:1px;background:#cfcfd5;"></div>
<div style="position:absolute;left:60px;top:426px;width:9px;height:1px;background:#cfcfd5;"></div>
<div style="position:absolute;left:60px;top:462px;width:9px;height:1px;background:#cfcfd5;"></div>
<div style="position:absolute;left:60px;top:480px;width:9px;height:1px;background:#cfcfd5;"></div>
<div style="position:absolute;left:60px;top:498px;width:9px;height:1px;background:#cfcfd5;"></div>
<svg style="position:absolute;left:15.8px;top:281px;" width="7.4" height="4.5" viewBox="0 0 7.4 4.5"><path d="M0 0h7.400L3.700 4.200z" fill="#62626a"/></svg>
<svg style="position:absolute;left:35.8px;top:335px;" width="7.4" height="4.5" viewBox="0 0 7.4 4.5"><path d="M0 0h7.400L3.700 4.200z" fill="#62626a"/></svg>
<svg style="position:absolute;left:37px;top:296.3px;" width="4.5" height="7.4" viewBox="0 0 4.5 7.4"><path d="M0 0v7.400L4.200 3.700z" fill="#62626a"/></svg>
<svg style="position:absolute;left:37px;top:314.3px;" width="4.5" height="7.4" viewBox="0 0 4.5 7.4"><path d="M0 0v7.400L4.200 3.700z" fill="#62626a"/></svg>
<svg style="position:absolute;left:57px;top:440.3px;" width="4.5" height="7.4" viewBox="0 0 4.5 7.4"><path d="M0 0v7.400L4.200 3.700z" fill="#62626a"/></svg>
<svg style="position:absolute;left:57px;top:512.3px;" width="4.5" height="7.4" viewBox="0 0 4.5 7.4"><path d="M0 0v7.400L4.200 3.700z" fill="#62626a"/></svg>
<svg style="position:absolute;left:17px;top:602.3px;" width="4.5" height="7.4" viewBox="0 0 4.5 7.4"><path d="M0 0v7.400L4.200 3.700z" fill="#62626a"/></svg>
<svg style="position:absolute;left:17px;top:638.3px;" width="4.5" height="7.4" viewBox="0 0 4.5 7.4"><path d="M0 0v7.400L4.200 3.700z" fill="#62626a"/></svg>
<svg style="position:absolute;left:12px;top:257.5px;" width="14" height="14" viewBox="0 0 14 14"><path d="M0.500 3.500l2.500-2.800h10v7.800l-2.500 3.500h-10z" fill="#7fc4e2" stroke="#3f9cc8" stroke-width="0.900"/><path d="M0.500 3.500h10v8.500h-10z" fill="#c5ebf8" stroke="#3f9cc8" stroke-width="0.900"/><path d="M10.500 3.500l2.500-2.800" stroke="#3f9cc8"/></svg>
<svg style="position:absolute;left:32.5px;top:275px;" width="14" height="15" viewBox="0 0 14 15"><rect x="0.500" y="0.500" width="12.500" height="14" fill="#fbfbfd" stroke="#b5b5bd" stroke-width="0.900"/>
<g fill="#fff" stroke="#2a7fa8" stroke-width="0.900"><rect x="2" y="2.500" width="2.300" height="2.300"/><rect x="2" y="6.300" width="2.300" height="2.300"/><rect x="2" y="10.100" width="2.300" height="2.300"/></g><path d="M6 3.600h5.500M6 7.400h5.500M6 11.200h5.500" stroke="#8a8a92" stroke-width="0.900"/></svg>
<svg style="position:absolute;left:50.5px;top:292px;" width="17" height="16" viewBox="0 0 17 16"><path d="M3.500 0.500c-2.500 1.500-2.500 4.500-0.500 5.500M6 2.500c-2 1.500-1.500 4 0.500 5" fill="none" stroke="#4a4a52" stroke-width="0.900"/>
<rect x="3" y="6" width="9" height="6" rx="1.800" fill="#fff" stroke="#55565e" stroke-width="0.900"/><rect x="7" y="9.500" width="9.500" height="6" rx="1.500" fill="#fff" stroke="#55565e" stroke-width="0.900"/></svg>
<svg style="position:absolute;left:50.5px;top:310px;" width="17" height="17" viewBox="0 0 17 17"><rect x="0.800" y="0.800" width="10.700" height="10.200" rx="0.800" fill="#bfe6f5" stroke="#2f8db9" stroke-width="1.100"/><path d="M5 4.500l1.300-1.300h10.200v10.400l-1.300 1.500" fill="#8fd0ec" stroke="#2f8db9" stroke-width="0.800"/><rect x="4.600" y="4.600" width="10.700" height="10.700" rx="0.800" fill="#ffffff" stroke="#2f8db9" stroke-width="1.100"/></svg>
<svg style="position:absolute;left:50.5px;top:328px;" width="17" height="16" viewBox="0 0 17 16"><path d="M1 0.500v4M9.500 0.500v4M1 2h8.500" stroke="#33343a" stroke-width="1" fill="none"/><rect x="2.500" y="4.500" width="9" height="5.500" fill="#fff" stroke="#6a6a72" stroke-width="0.900"/>
<path d="M11.500 9h4M15.200 9l-3 4.500" stroke="#33343a" stroke-width="1" fill="none"/><path d="M11 15.500l0.500-3.300 2.500 1.700z" fill="#33343a"/></svg>
<svg style="position:absolute;left:72px;top:346px;" width="15" height="15" viewBox="0 0 15 15"><text x="0" y="8.500" font-family="Liberation Serif" font-size="10.500" font-weight="bold" fill="#33343a">A</text><path d="M8 5.500h6.500M8 7.800h6.500M1 10.100h13.500M1 12.400h13.500M1 14.700h13.500" stroke="#5a5a62" stroke-width="0.900"/></svg>
<svg style="position:absolute;left:72px;top:364px;" width="15" height="15" viewBox="0 0 15 15"><text x="0" y="8.500" font-family="Liberation Serif" font-size="10.500" font-weight="bold" fill="#33343a">A</text><path d="M8 5.500h6.500M8 7.800h6.500M1 10.100h13.500M1 12.400h13.500M1 14.700h13.500" stroke="#5a5a62" stroke-width="0.900"/></svg>
<svg style="position:absolute;left:72px;top:382px;" width="15" height="15" viewBox="0 0 15 15"><text x="0" y="8.500" font-family="Liberation Serif" font-size="10.500" font-weight="bold" fill="#b5b5bd">A</text><path d="M8 5.500h6.500M8 7.800h6.500M1 10.100h13.500M1 12.400h13.500M1 14.700h13.500" stroke="#c1c1c8" stroke-width="0.900"/></svg>
<svg style="position:absolute;left:72px;top:400px;" width="15" height="15" viewBox="0 0 15 15"><text x="0" y="8.500" font-family="Liberation Serif" font-size="10.500" font-weight="bold" fill="#33343a">A</text><path d="M8 5.500h6.500M8 7.800h6.500M1 10.100h13.500M1 12.400h13.500M1 14.700h13.500" stroke="#5a5a62" stroke-width="0.900"/></svg>
<svg style="position:absolute;left:70.5px;top:420.5px;" width="17" height="11" viewBox="0 0 17 11"><path d="M0.500 0.600h16M0.500 10h16" stroke="#33343a" stroke-width="1"/><path d="M1 2.500l2 2.700-2 2.700M3.200 2.500l2 2.700-2 2.700" fill="none" stroke="#55565e" stroke-width="0.800"/><path d="M6.500 0.600v9.400" stroke="#33343a" stroke-width="0.900"/>
<text x="7.800" y="8.300" font-family="Liberation Sans" font-size="7.500" font-weight="bold" fill="#33343a">1M</text></svg>
<svg style="position:absolute;left:70.5px;top:438.5px;" width="17" height="11" viewBox="0 0 17 11"><path d="M0.500 0.600h16M0.500 10h16" stroke="#33343a" stroke-width="1"/><path d="M1 2.500l2 2.700-2 2.700M3.200 2.500l2 2.700-2 2.700" fill="none" stroke="#55565e" stroke-width="0.800"/><path d="M6.500 0.600v9.400" stroke="#33343a" stroke-width="0.900"/>
<text x="7.800" y="8.300" font-family="Liberation Sans" font-size="7.500" font-weight="bold" fill="#33343a">1M</text></svg>
<svg style="position:absolute;left:73.5px;top:453.5px;" width="11" height="17" viewBox="0 0 11 17"><rect x="2" y="0.600" width="6.500" height="7" fill="#fff" stroke="#33343a" stroke-width="0.900"/><text x="3.300" y="6.300" font-family="Liberation Sans" font-size="5.500" font-weight="bold" fill="#33343a">A</text>
<path d="M5.200 7.600v5" stroke="#33343a" stroke-width="0.900"/><path d="M0.500 16.500h9.500l-4.800-4.500z" fill="#33343a"/></svg>
<svg style="position:absolute;left:73.5px;top:471.5px;" width="11" height="17" viewBox="0 0 11 17"><rect x="2" y="0.600" width="6.500" height="7" fill="#fff" stroke="#33343a" stroke-width="0.900"/><text x="3.300" y="6.300" font-family="Liberation Sans" font-size="5.500" font-weight="bold" fill="#33343a">A</text>
<path d="M5.200 7.600v5" stroke="#33343a" stroke-width="0.900"/><path d="M0.500 16.500h9.500l-4.800-4.500z" fill="#33343a"/></svg>
<svg style="position:absolute;left:73.5px;top:489.5px;" width="11" height="17" viewBox="0 0 11 17"><rect x="2" y="0.600" width="6.500" height="7" fill="#fff" stroke="#33343a" stroke-width="0.900"/><text x="3.300" y="6.300" font-family="Liberation Sans" font-size="5.500" font-weight="bold" fill="#33343a">A</text>
<path d="M5.200 7.600v5" stroke="#33343a" stroke-width="0.900"/><path d="M0.500 16.500h9.500l-4.800-4.500z" fill="#33343a"/></svg>
<svg style="position:absolute;left:31px;top:529px;" width="15" height="10" viewBox="0 0 15 10"><path d="M4 1h10.500l-3.500 8h-10.500z" fill="#fff" stroke="#7a6428" stroke-width="1.200"/></svg>
<svg style="position:absolute;left:31px;top:547px;" width="15" height="10" viewBox="0 0 15 10"><path d="M4 1h10.500l-3.500 8h-10.500z" fill="#fff" stroke="#7a6428" stroke-width="1.200"/></svg>
<svg style="position:absolute;left:31px;top:565px;" width="15" height="10" viewBox="0 0 15 10"><path d="M4 1h10.500l-3.500 8h-10.500z" fill="#fff" stroke="#7a6428" stroke-width="1.200"/></svg>
<svg style="position:absolute;left:31px;top:580px;" width="17" height="16" viewBox="0 0 17 16"><g stroke="#6b5a2a" stroke-width="1" fill="none"><path d="M5.500 1.500v9.500h9.500M5.500 11l-4.500 4"/></g><path d="M5.500 0l-1.400 2.500h2.800zM16.500 11l-2.500-1.400v2.800zM0.300 15.700l0.600-2.800 2 2.100z" fill="#6b5a2a"/></svg>
<svg style="position:absolute;left:31px;top:598px;" width="17" height="16" viewBox="0 0 17 16"><path d="M0.500 7l6-6.500h9.500v8.500l-6 6.500h-9.500z" fill="#bfe6f5" stroke="#9ecbe0" stroke-width="0.500"/><path d="M6.500 0.500h9.500v8.500h-9.500z" fill="#6fb5d6"/><path d="M10 7v8.500l6-6.500v-8.500z" fill="#5aa6c9" opacity="0.600"/>
<path d="M0.500 7h9.500v8.500h-9.500z" fill="#f4f4f7" stroke="#b9b9c1" stroke-width="0.800"/></svg>
<svg style="position:absolute;left:31px;top:616px;" width="17" height="16" viewBox="0 0 17 16"><path d="M0.500 6.500h7l4.500 4.500v5h-11.500z" fill="url(#gg2)"/><path d="M12 11l3.500-3.500v5l-3.500 3.500z" fill="#c9c9d1"/><path d="M4.500 3.500l4.500-3 6.500 7-3.500 3.500-4.500-4.500z" fill="#bfe6f5" stroke="#4fa9d1" stroke-width="1"/></svg>
<svg style="position:absolute;left:31px;top:634.5px;" width="16" height="16" viewBox="0 0 16 16"><path d="M0.800 0.800h13v13h-13z" fill="#fff" stroke="#7a6bb8" stroke-width="1.200"/><path d="M13.800 0.800l1.500 1.200v13.200h-13.300l-1.200-1.400h13z" fill="#b5add8"/>
<g fill="#4a3591"><rect x="3" y="3" width="2.600" height="2.600"/><rect x="9" y="3" width="2.600" height="2.600"/><rect x="3" y="9" width="2.600" height="2.600"/><rect x="9" y="9" width="2.600" height="2.600"/></g></svg>
<div style="position:absolute;left:1882.7px;top:379px;width:32.3px;height:452.5px;background:#f6f6f8;border:1px solid #bdbdc6;box-sizing:border-box;"></div>
<svg style="position:absolute;left:0px;top:0px;" width="1920" height="1080" viewBox="0 0 1920 1080"><defs>
<linearGradient id="cone" gradientUnits="userSpaceOnUse" x1="767" y1="0" x2="1435" y2="0">
<stop offset="0" stop-color="#f1ef82"/><stop offset="0.08" stop-color="#faf88a"/><stop offset="0.26" stop-color="#fffd90"/><stop offset="0.33" stop-color="#ffffc4"/><stop offset="0.365" stop-color="#ffffd8"/><stop offset="0.40" stop-color="#ffffc0"/><stop offset="0.46" stop-color="#fffd92"/>
<stop offset="0.56" stop-color="#fdfb8a"/><stop offset="0.68" stop-color="#f3f183"/><stop offset="0.80" stop-color="#dcda76"/><stop offset="0.90" stop-color="#c2c068"/><stop offset="1" stop-color="#a8a65a"/></linearGradient>
<linearGradient id="chamf" gradientUnits="userSpaceOnUse" x1="806" y1="0" x2="1398" y2="0">
<stop offset="0" stop-color="#f4f285"/><stop offset="0.3" stop-color="#fcfa8a"/><stop offset="0.55" stop-color="#f9f787"/><stop offset="0.75" stop-color="#e4e17a"/><stop offset="0.9" stop-color="#cbc86d"/><stop offset="1" stop-color="#c0bd67"/></linearGradient>
<linearGradient id="topf" gradientUnits="userSpaceOnUse" x1="825" y1="0" x2="1380" y2="0">
<stop offset="0" stop-color="#ebe87e"/><stop offset="0.6" stop-color="#e9e67c"/><stop offset="1" stop-color="#e5e279"/></linearGradient>
<linearGradient id="holeg" x1="0" y1="0" x2="1" y2="0"><stop offset="0" stop-color="#807e34"/><stop offset="0.25" stop-color="#a9a74e"/><stop offset="0.6" stop-color="#d3d06a"/><stop offset="1" stop-color="#ebe880"/></linearGradient>
<radialGradient id="rimg" cx="0.62" cy="0.15" r="0.6"><stop offset="0" stop-color="#ffffcc"/><stop offset="1" stop-color="#f5f38e"/></radialGradient>
</defs><path d="M767.9 623.1 L767.9 621.9 L768.0 620.6 L768.0 619.4 L768.1 618.1 L768.3 616.9 L768.4 615.7 L768.6 614.4 L768.8 613.2 L769.0 612.0 L769.3 610.7 L769.5 609.5 L769.8 608.3 L770.2 607.0 L770.5 605.8 L770.9 604.6 L771.3 603.3 L771.7 602.1 L772.2 600.9 L772.7 599.7 L773.2 598.5 L773.7 597.2 L774.2 596.0 L774.8 594.8 L775.4 593.6 L776.0 592.4 L776.7 591.2 L777.4 590.0 L778.1 588.8 L778.8 587.6 L779.5 586.4 L780.3 585.2 L781.1 584.1 L781.9 582.9 L782.8 581.7 L783.7 580.5 L784.6 579.4 L785.5 578.2 L786.4 577.0 L787.4 575.9 L788.4 574.7 L789.4 573.6 L790.5 572.4 L791.5 571.3 L792.6 570.1 L793.7 569.0 L794.9 567.9 L796.0 566.8 L830.5 533.9 L831.5 532.9 L832.6 531.9 L833.7 530.9 L834.7 530.0 L835.9 529.0 L837.0 528.0 L838.2 527.1 L839.3 526.1 L840.5 525.2 L841.8 524.2 L843.0 523.3 L844.3 522.4 L845.5 521.4 L846.8 520.5 L848.2 519.6 L849.5 518.7 L850.8 517.8 L852.2 516.9 L853.6 516.0 L855.0 515.1 L856.5 514.2 L857.9 513.3 L859.4 512.5 L860.9 511.6 L862.4 510.7 L863.9 509.9 L865.4 509.0 L867.0 508.2 L868.6 507.4 L870.2 506.5 L871.8 505.7 L873.4 504.9 L875.1 504.1 L876.7 503.3 L878.4 502.5 L880.1 501.7 L881.8 500.9 L883.6 500.1 L885.3 499.3 L887.1 498.6 L888.9 497.8 L890.7 497.1 L892.5 496.3 L894.3 495.6 L896.2 494.9 L898.1 494.1 L899.9 493.4 L901.8 492.7 L903.7 492.0 L905.7 491.3 L907.6 490.6 L909.6 490.0 L911.5 489.3 L913.5 488.6 L915.5 488.0 L917.5 487.3 L919.6 486.7 L921.6 486.1 L923.7 485.4 L925.7 484.8 L927.8 484.2 L929.9 483.6 L932.0 483.0 L934.1 482.4 L936.3 481.9 L938.4 481.3 L940.6 480.7 L942.8 480.2 L944.9 479.6 L947.1 479.1 L949.3 478.6 L951.6 478.1 L953.8 477.6 L956.0 477.1 L958.3 476.6 L960.6 476.1 L962.8 475.6 L965.1 475.1 L967.4 474.7 L969.7 474.2 L972.0 473.8 L974.4 473.4 L976.7 472.9 L979.1 472.5 L981.4 472.1 L983.8 471.7 L986.1 471.3 L988.5 471.0 L990.9 470.6 L993.3 470.2 L995.7 469.9 L998.1 469.5 L1000.6 469.2 L1003.0 468.9 L1005.4 468.6 L1007.9 468.3 L1010.3 468.0 L1012.8 467.7 L1015.3 467.4 L1017.8 467.2 L1020.2 466.9 L1022.7 466.6 L1025.2 466.4 L1027.7 466.2 L1030.2 466.0 L1032.7 465.7 L1035.2 465.5 L1037.8 465.3 L1040.3 465.2 L1042.8 465.0 L1045.4 464.8 L1047.9 464.7 L1050.4 464.5 L1053.0 464.4 L1055.5 464.3 L1058.1 464.2 L1060.7 464.0 L1063.2 463.9 L1065.8 463.9 L1068.3 463.8 L1070.9 463.7 L1073.5 463.7 L1076.1 463.6 L1078.6 463.6 L1081.2 463.5 L1083.8 463.5 L1086.4 463.5 L1089.0 463.5 L1091.5 463.5 L1094.1 463.5 L1096.7 463.6 L1099.3 463.6 L1101.9 463.6 L1104.5 463.7 L1107.1 463.8 L1109.6 463.8 L1112.2 463.9 L1114.8 464.0 L1117.4 464.1 L1120.0 464.2 L1122.5 464.4 L1125.1 464.5 L1127.7 464.6 L1130.3 464.8 L1132.9 464.9 L1135.4 465.1 L1138.0 465.3 L1140.6 465.5 L1143.1 465.7 L1145.7 465.9 L1148.2 466.1 L1150.8 466.3 L1153.3 466.6 L1155.9 466.8 L1158.4 467.1 L1161.0 467.3 L1163.5 467.6 L1166.0 467.9 L1168.5 468.2 L1171.0 468.5 L1173.6 468.8 L1176.1 469.1 L1178.6 469.4 L1181.1 469.8 L1183.5 470.1 L1186.0 470.5 L1188.5 470.8 L1191.0 471.2 L1193.4 471.6 L1195.9 472.0 L1198.3 472.4 L1200.8 472.8 L1203.2 473.2 L1205.6 473.7 L1208.1 474.1 L1210.5 474.5 L1212.9 475.0 L1215.3 475.5 L1217.6 475.9 L1220.0 476.4 L1222.4 476.9 L1224.7 477.4 L1227.1 477.9 L1229.4 478.4 L1231.8 478.9 L1234.1 479.5 L1236.4 480.0 L1238.7 480.6 L1241.0 481.1 L1243.3 481.7 L1245.5 482.3 L1247.8 482.8 L1250.0 483.4 L1252.2 484.0 L1254.5 484.6 L1256.7 485.2 L1258.9 485.9 L1261.1 486.5 L1263.2 487.1 L1265.4 487.8 L1267.6 488.4 L1269.7 489.1 L1271.8 489.8 L1273.9 490.4 L1276.0 491.1 L1278.1 491.8 L1280.2 492.5 L1282.2 493.2 L1284.3 493.9 L1286.3 494.6 L1288.3 495.4 L1290.3 496.1 L1292.3 496.8 L1294.3 497.6 L1296.2 498.3 L1298.2 499.1 L1300.1 499.9 L1302.0 500.6 L1303.9 501.4 L1305.8 502.2 L1307.7 503.0 L1309.5 503.8 L1311.4 504.6 L1313.2 505.4 L1315.0 506.3 L1316.8 507.1 L1318.5 507.9 L1320.3 508.8 L1322.0 509.6 L1323.7 510.5 L1325.5 511.3 L1327.1 512.2 L1328.8 513.1 L1330.5 513.9 L1332.1 514.8 L1333.7 515.7 L1335.3 516.6 L1336.9 517.5 L1338.5 518.4 L1340.0 519.3 L1341.5 520.2 L1343.0 521.2 L1344.5 522.1 L1346.0 523.0 L1347.5 523.9 L1348.9 524.9 L1350.3 525.8 L1351.7 526.8 L1353.1 527.7 L1354.4 528.7 L1355.8 529.7 L1357.1 530.6 L1358.4 531.6 L1359.7 532.6 L1360.9 533.6 L1362.2 534.6 L1363.4 535.5 L1364.6 536.5 L1365.8 537.5 L1366.9 538.5 L1368.1 539.5 L1369.2 540.6 L1370.3 541.6 L1371.4 542.6 L1403.8 573.4 L1405.0 574.6 L1406.2 575.7 L1407.4 576.9 L1408.5 578.0 L1409.6 579.2 L1410.7 580.4 L1411.8 581.5 L1412.8 582.7 L1413.8 583.9 L1414.8 585.1 L1415.8 586.3 L1416.7 587.4 L1417.6 588.6 L1418.5 589.8 L1419.4 591.0 L1420.2 592.2 L1421.0 593.4 L1421.8 594.6 L1422.6 595.9 L1423.4 597.1 L1424.1 598.3 L1424.8 599.5 L1425.4 600.7 L1426.1 601.9 L1426.7 603.2 L1427.3 604.4 L1427.9 605.6 L1428.4 606.8 L1429.0 608.1 L1429.4 609.3 L1429.9 610.5 L1430.4 611.8 L1430.8 613.0 L1431.2 614.2 L1431.6 615.5 L1431.9 616.7 L1432.2 618.0 L1432.5 619.2 L1432.8 620.4 L1433.0 621.7 L1433.3 622.9 L1433.5 624.2 L1433.6 625.4 L1433.8 626.7 L1433.9 627.9 L1434.0 629.1 L1434.0 630.4 L1434.1 631.6 L1434.1 632.9 L1434.1 634.1 L1434.1 635.4 L1434.0 636.6 L1433.9 637.8 L1433.8 639.1 L1433.7 640.3 L1433.5 641.6 L1433.3 642.8 L1433.1 644.0 L1432.9 645.3 L1432.6 646.5 L1432.3 647.7 L1432.0 649.0 L1431.7 650.2 L1431.3 651.4 L1430.9 652.6 L1430.5 653.9 L1430.1 655.1 L1429.6 656.3 L1429.1 657.5 L1428.6 658.7 L1428.0 660.0 L1427.5 661.2 L1426.9 662.4 L1426.3 663.6 L1425.6 664.8 L1425.0 666.0 L1424.3 667.2 L1423.6 668.4 L1422.8 669.6 L1422.1 670.8 L1421.3 671.9 L1420.5 673.1 L1419.6 674.3 L1418.8 675.5 L1417.9 676.7 L1417.0 677.8 L1416.0 679.0 L1415.1 680.1 L1414.1 681.3 L1413.1 682.5 L1412.1 683.6 L1411.0 684.7 L1409.9 685.9 L1408.8 687.0 L1407.7 688.2 L1406.6 689.3 L1405.4 690.4 L1404.2 691.5 L1403.0 692.6 L1401.7 693.7 L1400.5 694.8 L1399.2 695.9 L1397.9 697.0 L1396.6 698.1 L1395.2 699.2 L1393.8 700.3 L1392.4 701.3 L1391.0 702.4 L1389.6 703.5 L1388.1 704.5 L1386.6 705.6 L1385.1 706.6 L1383.6 707.6 L1382.0 708.7 L1380.4 709.7 L1378.9 710.7 L1377.2 711.7 L1375.6 712.7 L1373.9 713.7 L1372.3 714.7 L1370.6 715.7 L1368.8 716.7 L1367.1 717.6 L1365.3 718.6 L1363.6 719.6 L1361.8 720.5 L1359.9 721.5 L1358.1 722.4 L1356.2 723.3 L1354.4 724.2 L1352.5 725.2 L1350.5 726.1 L1348.6 727.0 L1346.6 727.9 L1344.7 728.7 L1342.7 729.6 L1340.7 730.5 L1338.6 731.4 L1336.6 732.2 L1334.5 733.1 L1332.4 733.9 L1330.3 734.7 L1328.2 735.5 L1326.1 736.4 L1323.9 737.2 L1321.7 738.0 L1319.6 738.7 L1317.4 739.5 L1315.1 740.3 L1312.9 741.1 L1310.6 741.8 L1308.4 742.6 L1306.1 743.3 L1303.8 744.0 L1301.5 744.7 L1299.1 745.5 L1296.8 746.2 L1294.4 746.8 L1292.0 747.5 L1289.7 748.2 L1287.2 748.9 L1284.8 749.5 L1282.4 750.2 L1279.9 750.8 L1277.5 751.4 L1275.0 752.1 L1272.5 752.7 L1270.0 753.3 L1267.5 753.9 L1265.0 754.4 L1262.4 755.0 L1259.9 755.6 L1257.3 756.1 L1254.7 756.7 L1252.2 757.2 L1249.6 757.7 L1246.9 758.2 L1244.3 758.7 L1241.7 759.2 L1239.0 759.7 L1236.4 760.2 L1233.7 760.6 L1231.0 761.1 L1228.4 761.5 L1225.7 762.0 L1223.0 762.4 L1220.3 762.8 L1217.5 763.2 L1214.8 763.6 L1212.1 764.0 L1209.3 764.3 L1206.6 764.7 L1203.8 765.0 L1201.0 765.4 L1198.2 765.7 L1195.4 766.0 L1192.7 766.3 L1189.9 766.6 L1187.0 766.9 L1184.2 767.2 L1181.4 767.5 L1178.6 767.7 L1175.7 768.0 L1172.9 768.2 L1170.1 768.4 L1167.2 768.6 L1164.4 768.8 L1161.5 769.0 L1158.6 769.2 L1155.8 769.4 L1152.9 769.5 L1150.0 769.7 L1147.1 769.8 L1144.2 769.9 L1141.4 770.0 L1138.5 770.2 L1135.6 770.2 L1132.7 770.3 L1129.8 770.4 L1126.9 770.5 L1124.0 770.5 L1121.1 770.5 L1118.2 770.6 L1115.3 770.6 L1112.3 770.6 L1109.4 770.6 L1106.5 770.6 L1103.6 770.6 L1100.7 770.5 L1097.8 770.5 L1094.9 770.4 L1092.0 770.3 L1089.1 770.3 L1086.2 770.2 L1083.2 770.1 L1080.3 770.0 L1077.4 769.8 L1074.5 769.7 L1071.6 769.5 L1068.7 769.4 L1065.8 769.2 L1062.9 769.0 L1060.1 768.9 L1057.2 768.7 L1054.3 768.4 L1051.4 768.2 L1048.5 768.0 L1045.7 767.8 L1042.8 767.5 L1039.9 767.2 L1037.1 767.0 L1034.2 766.7 L1031.4 766.4 L1028.5 766.1 L1025.7 765.8 L1022.8 765.4 L1020.0 765.1 L1017.2 764.7 L1014.4 764.4 L1011.6 764.0 L1008.8 763.6 L1006.0 763.3 L1003.2 762.9 L1000.4 762.4 L997.6 762.0 L994.9 761.6 L992.1 761.2 L989.4 760.7 L986.6 760.2 L983.9 759.8 L981.2 759.3 L978.5 758.8 L975.8 758.3 L973.1 757.8 L970.4 757.3 L967.7 756.7 L965.1 756.2 L962.4 755.6 L959.8 755.1 L957.1 754.5 L954.5 753.9 L951.9 753.4 L949.3 752.8 L946.7 752.1 L944.2 751.5 L941.6 750.9 L939.0 750.3 L936.5 749.6 L934.0 749.0 L931.5 748.3 L929.0 747.6 L926.5 746.9 L924.0 746.3 L921.6 745.6 L919.1 744.8 L916.7 744.1 L914.3 743.4 L911.9 742.7 L909.5 741.9 L907.1 741.2 L904.7 740.4 L902.4 739.6 L900.1 738.9 L897.7 738.1 L895.4 737.3 L893.2 736.5 L890.9 735.7 L888.6 734.8 L886.4 734.0 L884.2 733.2 L882.0 732.3 L879.8 731.5 L877.6 730.6 L875.5 729.8 L873.4 728.9 L871.2 728.0 L869.1 727.1 L867.1 726.2 L865.0 725.3 L862.9 724.4 L860.9 723.5 L858.9 722.5 L856.9 721.6 L855.0 720.7 L853.0 719.7 L851.1 718.7 L849.2 717.8 L847.3 716.8 L845.4 715.8 L843.5 714.9 L841.7 713.9 L839.9 712.9 L838.1 711.9 L836.3 710.9 L834.5 709.8 L832.8 708.8 L831.1 707.8 L829.4 706.8 L827.7 705.7 L826.1 704.7 L824.4 703.6 L822.8 702.6 L821.2 701.5 L819.7 700.4 L818.1 699.3 L816.6 698.3 L815.1 697.2 L813.6 696.1 L812.1 695.0 L810.7 693.9 L809.3 692.8 L807.9 691.7 L806.5 690.6 L805.2 689.4 L803.8 688.3 L802.5 687.2 L801.3 686.1 L800.0 684.9 L798.8 683.8 L797.5 682.6 L796.4 681.5 L795.2 680.3 L794.1 679.2 L792.9 678.0 L791.8 676.8 L790.8 675.7 L789.7 674.5 L788.7 673.3 L787.7 672.1 L786.7 670.9 L785.8 669.8 L784.8 668.6 L783.9 667.4 L783.1 666.2 L782.2 665.0 L781.4 663.8 L780.6 662.6 L779.8 661.4 L779.0 660.1 L778.3 658.9 L777.6 657.7 L776.9 656.5 L776.2 655.3 L775.6 654.1 L775.0 652.8 L774.4 651.6 L773.8 650.4 L773.3 649.1 L772.8 647.9 L772.3 646.7 L771.9 645.4 L771.4 644.2 L771.0 643.0 L770.6 641.7 L770.3 640.5 L769.9 639.3 L769.6 638.0 L769.3 636.8 L769.1 635.5 L768.9 634.3 L768.6 633.1 L768.5 631.8 L768.3 630.6 L768.2 629.3 L768.1 628.1 L768.0 626.8 L767.9 625.6 L767.9 624.4Z" fill="url(#cone)" stroke="#2b2a12" stroke-width="0.9"/><ellipse cx="1102.05" cy="589.10" rx="295.92" ry="125.43" transform="rotate(1.4 1102.05 589.10)" fill="url(#chamf)" stroke="#2b2a12" stroke-width="0.9"/><ellipse cx="1102.30" cy="581.70" rx="276.97" ry="116.54" transform="rotate(1.4 1102.30 581.70)" fill="url(#topf)" stroke="#2b2a12" stroke-width="0.9"/><g transform="translate(865.0 550.2) rotate(2)"><clipPath id="hc0"><ellipse cx="0" cy="0" rx="16.3" ry="7.3"/></clipPath><ellipse cx="0" cy="0" rx="16.3" ry="7.3" fill="url(#rimg)"/><g clip-path="url(#hc0)"><ellipse cx="-0.3" cy="2.5" rx="14.5" ry="5.8" fill="url(#holeg)" stroke="#2b2a12" stroke-width="1"/></g><ellipse cx="0" cy="0" rx="16.3" ry="7.3" fill="none" stroke="#3a3910" stroke-width="1.05"/></g><g transform="translate(915.9 556.7) rotate(2)"><clipPath id="hc1"><ellipse cx="0" cy="0" rx="16.3" ry="7.3"/></clipPath><ellipse cx="0" cy="0" rx="16.3" ry="7.3" fill="url(#rimg)"/><g clip-path="url(#hc1)"><ellipse cx="-0.3" cy="2.5" rx="14.5" ry="5.8" fill="url(#holeg)" stroke="#2b2a12" stroke-width="1"/></g><ellipse cx="0" cy="0" rx="16.3" ry="7.3" fill="none" stroke="#3a3910" stroke-width="1.05"/></g><g transform="translate(967.1 563.8) rotate(2)"><clipPath id="hc2"><ellipse cx="0" cy="0" rx="16.3" ry="7.3"/></clipPath><ellipse cx="0" cy="0" rx="16.3" ry="7.3" fill="url(#rimg)"/><g clip-path="url(#hc2)"><ellipse cx="-0.3" cy="2.5" rx="14.5" ry="5.8" fill="url(#holeg)" stroke="#2b2a12" stroke-width="1"/></g><ellipse cx="0" cy="0" rx="16.3" ry="7.3" fill="none" stroke="#3a3910" stroke-width="1.05"/></g><g transform="translate(1019.0 570.6) rotate(2)"><clipPath id="hc3"><ellipse cx="0" cy="0" rx="16.3" ry="7.3"/></clipPath><ellipse cx="0" cy="0" rx="16.3" ry="7.3" fill="url(#rimg)"/><g clip-path="url(#hc3)"><ellipse cx="-0.3" cy="2.5" rx="14.5" ry="5.8" fill="url(#holeg)" stroke="#2b2a12" stroke-width="1"/></g><ellipse cx="0" cy="0" rx="16.3" ry="7.3" fill="none" stroke="#3a3910" stroke-width="1.05"/></g><g transform="translate(1026.4 598.8) rotate(2)"><clipPath id="hc4"><ellipse cx="0" cy="0" rx="16.3" ry="7.3"/></clipPath><ellipse cx="0" cy="0" rx="16.3" ry="7.3" fill="url(#rimg)"/><g clip-path="url(#hc4)"><ellipse cx="-0.3" cy="2.5" rx="14.5" ry="5.8" fill="url(#holeg)" stroke="#2b2a12" stroke-width="1"/></g><ellipse cx="0" cy="0" rx="16.3" ry="7.3" fill="none" stroke="#3a3910" stroke-width="1.05"/></g><g transform="translate(980.0 609.2) rotate(2)"><clipPath id="hc5"><ellipse cx="0" cy="0" rx="16.3" ry="7.3"/></clipPath><ellipse cx="0" cy="0" rx="16.3" ry="7.3" fill="url(#rimg)"/><g clip-path="url(#hc5)"><ellipse cx="-0.3" cy="2.5" rx="14.5" ry="5.8" fill="url(#holeg)" stroke="#2b2a12" stroke-width="1"/></g><ellipse cx="0" cy="0" rx="16.3" ry="7.3" fill="none" stroke="#3a3910" stroke-width="1.05"/></g><g transform="translate(933.4 619.2) rotate(2)"><clipPath id="hc6"><ellipse cx="0" cy="0" rx="16.3" ry="7.3"/></clipPath><ellipse cx="0" cy="0" rx="16.3" ry="7.3" fill="url(#rimg)"/><g clip-path="url(#hc6)"><ellipse cx="-0.3" cy="2.5" rx="14.5" ry="5.8" fill="url(#holeg)" stroke="#2b2a12" stroke-width="1"/></g><ellipse cx="0" cy="0" rx="16.3" ry="7.3" fill="none" stroke="#3a3910" stroke-width="1.05"/></g><g transform="translate(886.4 629.6) rotate(2)"><clipPath id="hc7"><ellipse cx="0" cy="0" rx="16.3" ry="7.3"/></clipPath><ellipse cx="0" cy="0" rx="16.3" ry="7.3" fill="url(#rimg)"/><g clip-path="url(#hc7)"><ellipse cx="-0.3" cy="2.5" rx="14.5" ry="5.8" fill="url(#holeg)" stroke="#2b2a12" stroke-width="1"/></g><ellipse cx="0" cy="0" rx="16.3" ry="7.3" fill="none" stroke="#3a3910" stroke-width="1.05"/></g><g transform="translate(1078.3 616.6) rotate(2)"><clipPath id="hc8"><ellipse cx="0" cy="0" rx="16.3" ry="7.3"/></clipPath><ellipse cx="0" cy="0" rx="16.3" ry="7.3" fill="url(#rimg)"/><g clip-path="url(#hc8)"><ellipse cx="-0.3" cy="2.5" rx="14.5" ry="5.8" fill="url(#holeg)" stroke="#2b2a12" stroke-width="1"/></g><ellipse cx="0" cy="0" rx="16.3" ry="7.3" fill="none" stroke="#3a3910" stroke-width="1.05"/></g><g transform="translate(1063.7 637.7) rotate(2)"><clipPath id="hc9"><ellipse cx="0" cy="0" rx="16.3" ry="7.3"/></clipPath><ellipse cx="0" cy="0" rx="16.3" ry="7.3" fill="url(#rimg)"/><g clip-path="url(#hc9)"><ellipse cx="-0.3" cy="2.5" rx="14.5" ry="5.8" fill="url(#holeg)" stroke="#2b2a12" stroke-width="1"/></g><ellipse cx="0" cy="0" rx="16.3" ry="7.3" fill="none" stroke="#3a3910" stroke-width="1.05"/></g><g transform="translate(1049.4 659.4) rotate(2)"><clipPath id="hc10"><ellipse cx="0" cy="0" rx="16.3" ry="7.3"/></clipPath><ellipse cx="0" cy="0" rx="16.3" ry="7.3" fill="url(#rimg)"/><g clip-path="url(#hc10)"><ellipse cx="-0.3" cy="2.5" rx="14.5" ry="5.8" fill="url(#holeg)" stroke="#2b2a12" stroke-width="1"/></g><ellipse cx="0" cy="0" rx="16.3" ry="7.3" fill="none" stroke="#3a3910" stroke-width="1.05"/></g><g transform="translate(1035.2 681.4) rotate(2)"><clipPath id="hc11"><ellipse cx="0" cy="0" rx="16.3" ry="7.3"/></clipPath><ellipse cx="0" cy="0" rx="16.3" ry="7.3" fill="url(#rimg)"/><g clip-path="url(#hc11)"><ellipse cx="-0.3" cy="2.5" rx="14.5" ry="5.8" fill="url(#holeg)" stroke="#2b2a12" stroke-width="1"/></g><ellipse cx="0" cy="0" rx="16.3" ry="7.3" fill="none" stroke="#3a3910" stroke-width="1.05"/></g><g transform="translate(1169.4 482.1) rotate(2)"><clipPath id="hc12"><ellipse cx="0" cy="0" rx="16.3" ry="7.3"/></clipPath><ellipse cx="0" cy="0" rx="16.3" ry="7.3" fill="url(#rimg)"/><g clip-path="url(#hc12)"><ellipse cx="-0.3" cy="2.5" rx="14.5" ry="5.8" fill="url(#holeg)" stroke="#2b2a12" stroke-width="1"/></g><ellipse cx="0" cy="0" rx="16.3" ry="7.3" fill="none" stroke="#3a3910" stroke-width="1.05"/></g><g transform="translate(1154.8 503.5) rotate(2)"><clipPath id="hc13"><ellipse cx="0" cy="0" rx="16.3" ry="7.3"/></clipPath><ellipse cx="0" cy="0" rx="16.3" ry="7.3" fill="url(#rimg)"/><g clip-path="url(#hc13)"><ellipse cx="-0.3" cy="2.5" rx="14.5" ry="5.8" fill="url(#holeg)" stroke="#2b2a12" stroke-width="1"/></g><ellipse cx="0" cy="0" rx="16.3" ry="7.3" fill="none" stroke="#3a3910" stroke-width="1.05"/></g><g transform="translate(1140.2 525.2) rotate(2)"><clipPath id="hc14"><ellipse cx="0" cy="0" rx="16.3" ry="7.3"/></clipPath><ellipse cx="0" cy="0" rx="16.3" ry="7.3" fill="url(#rimg)"/><g clip-path="url(#hc14)"><ellipse cx="-0.3" cy="2.5" rx="14.5" ry="5.8" fill="url(#holeg)" stroke="#2b2a12" stroke-width="1"/></g><ellipse cx="0" cy="0" rx="16.3" ry="7.3" fill="none" stroke="#3a3910" stroke-width="1.05"/></g><g transform="translate(1125.6 546.6) rotate(2)"><clipPath id="hc15"><ellipse cx="0" cy="0" rx="16.3" ry="7.3"/></clipPath><ellipse cx="0" cy="0" rx="16.3" ry="7.3" fill="url(#rimg)"/><g clip-path="url(#hc15)"><ellipse cx="-0.3" cy="2.5" rx="14.5" ry="5.8" fill="url(#holeg)" stroke="#2b2a12" stroke-width="1"/></g><ellipse cx="0" cy="0" rx="16.3" ry="7.3" fill="none" stroke="#3a3910" stroke-width="1.05"/></g><g transform="translate(1177.5 564.8) rotate(2)"><clipPath id="hc16"><ellipse cx="0" cy="0" rx="16.3" ry="7.3"/></clipPath><ellipse cx="0" cy="0" rx="16.3" ry="7.3" fill="url(#rimg)"/><g clip-path="url(#hc16)"><ellipse cx="-0.3" cy="2.5" rx="14.5" ry="5.8" fill="url(#holeg)" stroke="#2b2a12" stroke-width="1"/></g><ellipse cx="0" cy="0" rx="16.3" ry="7.3" fill="none" stroke="#3a3910" stroke-width="1.05"/></g><g transform="translate(1224.5 554.1) rotate(2)"><clipPath id="hc17"><ellipse cx="0" cy="0" rx="16.3" ry="7.3"/></clipPath><ellipse cx="0" cy="0" rx="16.3" ry="7.3" fill="url(#rimg)"/><g clip-path="url(#hc17)"><ellipse cx="-0.3" cy="2.5" rx="14.5" ry="5.8" fill="url(#holeg)" stroke="#2b2a12" stroke-width="1"/></g><ellipse cx="0" cy="0" rx="16.3" ry="7.3" fill="none" stroke="#3a3910" stroke-width="1.05"/></g><g transform="translate(1270.8 544.0) rotate(2)"><clipPath id="hc18"><ellipse cx="0" cy="0" rx="16.3" ry="7.3"/></clipPath><ellipse cx="0" cy="0" rx="16.3" ry="7.3" fill="url(#rimg)"/><g clip-path="url(#hc18)"><ellipse cx="-0.3" cy="2.5" rx="14.5" ry="5.8" fill="url(#holeg)" stroke="#2b2a12" stroke-width="1"/></g><ellipse cx="0" cy="0" rx="16.3" ry="7.3" fill="none" stroke="#3a3910" stroke-width="1.05"/></g><g transform="translate(1317.5 533.6) rotate(2)"><clipPath id="hc19"><ellipse cx="0" cy="0" rx="16.3" ry="7.3"/></clipPath><ellipse cx="0" cy="0" rx="16.3" ry="7.3" fill="url(#rimg)"/><g clip-path="url(#hc19)"><ellipse cx="-0.3" cy="2.5" rx="14.5" ry="5.8" fill="url(#holeg)" stroke="#2b2a12" stroke-width="1"/></g><ellipse cx="0" cy="0" rx="16.3" ry="7.3" fill="none" stroke="#3a3910" stroke-width="1.05"/></g><g transform="translate(1185.4 592.4) rotate(2)"><clipPath id="hc20"><ellipse cx="0" cy="0" rx="16.3" ry="7.3"/></clipPath><ellipse cx="0" cy="0" rx="16.3" ry="7.3" fill="url(#rimg)"/><g clip-path="url(#hc20)"><ellipse cx="-0.3" cy="2.5" rx="14.5" ry="5.8" fill="url(#holeg)" stroke="#2b2a12" stroke-width="1"/></g><ellipse cx="0" cy="0" rx="16.3" ry="7.3" fill="none" stroke="#3a3910" stroke-width="1.05"/></g><g transform="translate(1236.5 599.8) rotate(2)"><clipPath id="hc21"><ellipse cx="0" cy="0" rx="16.3" ry="7.3"/></clipPath><ellipse cx="0" cy="0" rx="16.3" ry="7.3" fill="url(#rimg)"/><g clip-path="url(#hc21)"><ellipse cx="-0.3" cy="2.5" rx="14.5" ry="5.8" fill="url(#holeg)" stroke="#2b2a12" stroke-width="1"/></g><ellipse cx="0" cy="0" rx="16.3" ry="7.3" fill="none" stroke="#3a3910" stroke-width="1.05"/></g><g transform="translate(1288.0 606.9) rotate(2)"><clipPath id="hc22"><ellipse cx="0" cy="0" rx="16.3" ry="7.3"/></clipPath><ellipse cx="0" cy="0" rx="16.3" ry="7.3" fill="url(#rimg)"/><g clip-path="url(#hc22)"><ellipse cx="-0.3" cy="2.5" rx="14.5" ry="5.8" fill="url(#holeg)" stroke="#2b2a12" stroke-width="1"/></g><ellipse cx="0" cy="0" rx="16.3" ry="7.3" fill="none" stroke="#3a3910" stroke-width="1.05"/></g><g transform="translate(1339.5 613.7) rotate(2)"><clipPath id="hc23"><ellipse cx="0" cy="0" rx="16.3" ry="7.3"/></clipPath><ellipse cx="0" cy="0" rx="16.3" ry="7.3" fill="url(#rimg)"/><g clip-path="url(#hc23)"><ellipse cx="-0.3" cy="2.5" rx="14.5" ry="5.8" fill="url(#holeg)" stroke="#2b2a12" stroke-width="1"/></g><ellipse cx="0" cy="0" rx="16.3" ry="7.3" fill="none" stroke="#3a3910" stroke-width="1.05"/></g></svg>
<svg style="position:absolute;left:0px;top:0px;will-change:transform;" width="1920" height="1080" viewBox="0 0 1920 1080"><path d="M1176.2 354.4 L1172.1 595.5" fill="none" stroke="#34323f" stroke-width="0.8"/><path d="M1202.2 356.7 L1198.4 595.5" fill="none" stroke="#34323f" stroke-width="0.8"/><path d="M1177.3 361.8 L1313.3 379.6" fill="none" stroke="#34323f" stroke-width="0.8"/><path d="M1177.3 361.8l7 -0.600 -0.400 2.600z M1202 365l-7 -2.200 0.400 -2.400z" fill="#34323f"/><path d="M1175.8 471.3 L1150.0 508.8" fill="none" stroke="#34323f" stroke-width="0.8"/><path d="M896.3 404.1 L916.1 406.8 L1042.0 544.3" fill="none" stroke="#34323f" stroke-width="0.8"/><circle cx="1042.300" cy="544.600" r="1.100" fill="#34323f"/><path d="M688.3 723.1 L700.8 725.2 L814.4 698.5" fill="none" stroke="#34323f" stroke-width="0.8"/><path d="M1387 557.500l9.500 1.300 -3.800 4.200z" fill="#2f0d60"/><path d="M1394.500 559.600L1411.100 555L1430.600 557.700" fill="none" stroke="#34323f" stroke-width="0.800"/><path d="M1435.600 553.200L1462.600 556.200L1455.800 567L1428.600 563.500z" fill="#fff" stroke="#47425c" stroke-width="0.800"/><text transform="matrix(1.550 0.180 -0.550 0.780 1439.300 562.500)" font-family="Liberation Sans" font-weight="bold" font-style="italic" font-size="10.500" fill="#2f0d60" stroke="#2f0d60" stroke-width="0.300">B</text><g transform="matrix(1 0.135 0 1 814.300 380)"><rect x="0" y="0" width="82" height="25.200" fill="#fff" stroke="#47425c" stroke-width="0.800"/><path d="M43.100 0v25.200" stroke="#47425c" stroke-width="0.800"/><path d="M8.700 19.500L16.600 8.300H37L28.700 19.500z" fill="none" stroke="#2f0d60" stroke-width="1.700"/><text x="48.300" y="19.300" font-family="Liberation Sans" font-weight="bold" font-size="18.500" fill="#2f0d60" textLength="26" lengthAdjust="spacingAndGlyphs">0.2</text><path d="M33.300 25.500h15.200l-7.600 13.300z" fill="#2f0d60"/><path d="M40.900 38v14.500" stroke="#47425c" stroke-width="0.900"/><rect x="26.800" y="52.300" width="26.300" height="25.800" fill="#fff" stroke="#47425c" stroke-width="0.800"/><text x="40" y="72.100" text-anchor="middle" font-family="Liberation Sans" font-weight="bold" font-size="18.500" fill="#2f0d60">A</text></g><g transform="matrix(1 0.135 0 1 1319.600 413.300)"><g transform="translate(2.5 -25) scale(1.0)"><ellipse cx="6.200" cy="-6.500" rx="5.200" ry="6.200" fill="none" stroke="#2f0d60" stroke-width="1.700"/><path d="M0.800 1.300L11.800 -14.500" stroke="#2f0d60" stroke-width="1.600"/></g><text x="16.500" y="-25" font-family="Liberation Sans" font-size="18.500" fill="#2f0d60" stroke="#2f0d60" stroke-width="0.700" textLength="47.500" lengthAdjust="spacingAndGlyphs">4±0.2</text><path d="M2.800 -18.700l10.200 10.700 14.500 -11.200" fill="none" stroke="#2f0d60" stroke-width="1.500"/><g transform="translate(30.5 -5.7) scale(1.0)"><ellipse cx="6.200" cy="-6.500" rx="5.200" ry="6.200" fill="none" stroke="#2f0d60" stroke-width="1.700"/><path d="M0.800 1.300L11.800 -14.500" stroke="#2f0d60" stroke-width="1.600"/></g><text x="44.500" y="-5.700" font-family="Liberation Sans" font-size="18.500" fill="#2f0d60" stroke="#2f0d60" stroke-width="0.700" textLength="115.500" lengthAdjust="spacingAndGlyphs">4.8±0.1 X 82°</text><rect x="0" y="0" width="159.700" height="25" fill="#fff" stroke="#47425c" stroke-width="0.800"/><path d="M35.500 0v25M111.500 0v25M134.800 0v25" stroke="#47425c" stroke-width="0.800"/><circle cx="19.300" cy="12.500" r="6.300" fill="none" stroke="#2f0d60" stroke-width="1.600"/><path d="M8.800 12.500h21M19.300 2.500v20.300" stroke="#2f0d60" stroke-width="1.500"/><g transform="translate(41.5 19.3) scale(1.0)"><ellipse cx="6.200" cy="-6.500" rx="5.200" ry="6.200" fill="none" stroke="#2f0d60" stroke-width="1.700"/><path d="M0.800 1.300L11.800 -14.500" stroke="#2f0d60" stroke-width="1.600"/></g><text x="55.500" y="19.300" font-family="Liberation Sans" font-size="18.500" fill="#2f0d60" stroke="#2f0d60" stroke-width="0.700" textLength="28" lengthAdjust="spacingAndGlyphs">0.2</text><circle cx="95.200" cy="12.800" r="9.800" fill="none" stroke="#2f0d60" stroke-width="1.600"/><text x="95.200" y="18.300" text-anchor="middle" font-family="Liberation Sans" font-size="15.500" font-weight="bold" fill="#2f0d60">M</text><text x="123.100" y="19.300" text-anchor="middle" font-family="Liberation Sans" font-size="18.500" fill="#2f0d60" stroke="#2f0d60" stroke-width="0.700">A</text><text x="147.300" y="19.300" text-anchor="middle" font-family="Liberation Sans" font-size="18.500" fill="#2f0d60" stroke="#2f0d60" stroke-width="0.700">B</text><text x="166" y="19.800" font-family="Liberation Sans" font-size="18.500" fill="#2f0d60" stroke="#2f0d60" stroke-width="0.700" textLength="34" lengthAdjust="spacingAndGlyphs">X24</text><path d="M71.500 25.300h15.600l-7.800 12.800z" fill="#2f0d60"/><path d="M79.300 37v14.500" stroke="#47425c" stroke-width="0.900"/><rect x="65.300" y="51.600" width="27.800" height="25.600" fill="#fff" stroke="#47425c" stroke-width="0.800"/><text x="79.200" y="71" text-anchor="middle" font-family="Liberation Sans" font-size="18.500" fill="#2f0d60" stroke="#2f0d60" stroke-width="0.700">C</text></g><g transform="matrix(1 0.126 -0.360 0.560 513 704.300)"><ellipse cx="7.500" cy="-6.200" rx="5.800" ry="6.200" fill="none" stroke="#2f0d60" stroke-width="1.900"/><path d="M0.500 1.500L14.500 -13.800" stroke="#2f0d60" stroke-width="1.800"/><text x="16.500" y="0" font-family="Liberation Sans" font-weight="bold" font-size="17" fill="#2f0d60" stroke="#2f0d60" stroke-width="0.500" textLength="148.500" lengthAdjust="spacingAndGlyphs">100±0.3 -40° DFT</text></g><path d="M1511 473.500L1510.800 505.500L1518 499.800L1524.300 511.800L1530.800 508.600L1524.300 496.600L1535 495.800Z" fill="#eeeef2" stroke="#0a0a0a" stroke-width="2" stroke-linejoin="round"/></svg>
<svg style="position:absolute;left:1890.0px;top:386.0px;" width="18" height="18" viewBox="0 0 18 18"><rect x="1.500" y="1.500" width="14" height="13" fill="#fff" stroke="#b9b9c1" stroke-width="0.900"/><circle cx="8" cy="7.5" r="4.300" fill="#fbfdff" stroke="#3f7fa6" stroke-width="1.300"/><path d="M11.2 10.8l4.200 4.400" stroke="#a9a9b1" stroke-width="2.400" stroke-linecap="round"/></svg>
<svg style="position:absolute;left:1890.0px;top:412.0px;" width="18" height="18" viewBox="0 0 18 18"><circle cx="7.5" cy="7" r="4.300" fill="#fbfdff" stroke="#3f7fa6" stroke-width="1.300"/><path d="M10.7 10.3l4.200 4.400" stroke="#a9a9b1" stroke-width="2.400" stroke-linecap="round"/><path d="M5 7h5M7.500 4.500v5" stroke="#1d5f86" stroke-width="1.500"/></svg>
<svg style="position:absolute;left:1890.0px;top:438.5px;" width="18" height="18" viewBox="0 0 18 18"><circle cx="7.5" cy="7" r="4.300" fill="#fbfdff" stroke="#3f7fa6" stroke-width="1.300"/><path d="M10.7 10.3l4.200 4.400" stroke="#a9a9b1" stroke-width="2.400" stroke-linecap="round"/><path d="M5 7h5" stroke="#1d5f86" stroke-width="1.500"/></svg>
<svg style="position:absolute;left:1890.0px;top:464.5px;" width="18" height="18" viewBox="0 0 18 18"><defs><linearGradient id="rp" x1="0" y1="0" x2="1" y2="1"><stop offset="0" stop-color="#ffffff"/><stop offset="0.5" stop-color="#dff2f8"/><stop offset="1" stop-color="#7fbdd0"/></linearGradient></defs><rect x="1.500" y="2" width="15" height="14" fill="url(#rp)" stroke="#a9c3cd" stroke-width="0.900"/><path d="M4 15.500l11.500 -11.500" stroke="#1f6f98" stroke-width="2"/></svg>
<svg style="position:absolute;left:1890.0px;top:492.0px;" width="18" height="18" viewBox="0 0 18 18"><defs><radialGradient id="sp" cx="0.350" cy="0.300" r="0.800"><stop offset="0" stop-color="#ffffff"/><stop offset="0.600" stop-color="#d4d4da"/><stop offset="1" stop-color="#85858d"/></radialGradient></defs><circle cx="11" cy="6" r="4.500" fill="url(#sp)"/><circle cx="6.500" cy="10.500" r="5.500" fill="url(#sp)"/></svg>
<svg style="position:absolute;left:1906px;top:506.5px;" width="4" height="4" viewBox="0 0 4 4"><path d="M4 0v4h-4z" fill="#44454d"/></svg>
<svg style="position:absolute;left:1890.0px;top:518.0px;" width="18" height="18" viewBox="0 0 18 18"><path d="M2 5.500l3-3.500h11v10l-3 4h-11z" fill="#f0f8fb" stroke="#1f6f98" stroke-width="1.200"/><path d="M2 5.500h11v10.500h-11zM13 5.500l3-3.500" fill="#ffffff" stroke="#1f6f98" stroke-width="1.200"/></svg>
<svg style="position:absolute;left:1906px;top:532.5px;" width="4" height="4" viewBox="0 0 4 4"><path d="M4 0v4h-4z" fill="#44454d"/></svg>
<div style="position:absolute;left:1888px;top:542px;width:23px;height:22.5px;background:#dcdce1;border:1px solid #c3c3ca;box-sizing:border-box;"></div>
<svg style="position:absolute;left:1890.0px;top:544.5px;" width="18" height="18" viewBox="0 0 18 18"><path d="M1.500 3.500h4c5 0 7.500 3 7.500 8" fill="none" stroke="#55565e" stroke-width="1.200"/><path d="M5.500 3.500c5 0 7.500 3 7.500 8l3.500-3c0-3-1.500-5-4-5z" fill="#bfe6f5" stroke="#2f8db9" stroke-width="0.700"/><path d="M12 9l4-4.500" stroke="#2f8db9" stroke-width="0.900"/><ellipse cx="12" cy="13.500" rx="4.200" ry="2.500" fill="#f2f2f5" stroke="#33343a" stroke-width="1"/><circle cx="12" cy="13.500" r="1.300" fill="#33343a"/></svg>
<svg style="position:absolute;left:1890.0px;top:570.0px;" width="18" height="18" viewBox="0 0 18 18"><path d="M1.500 6l5-4.500 8.500 2.500v8l-5 4.500-8.500-3z" fill="#dff2fa" stroke="#4fa9d1" stroke-width="0.900"/><path d="M10 8.500l5-4.500v8l-5 4.500z" fill="#7fc0de"/><path d="M1.500 6l8.500 2.500 5-4.500M10 8.500v8" fill="none" stroke="#4fa9d1" stroke-width="0.900"/><rect x="11" y="10.500" width="5" height="6" fill="#f5f5f8" stroke="#85858d" stroke-width="0.700"/><path d="M12.500 12.500h2M12.500 14.500h2" stroke="#33343a" stroke-width="0.800"/></svg>
<svg style="position:absolute;left:1906px;top:584.5px;" width="4" height="4" viewBox="0 0 4 4"><path d="M4 0v4h-4z" fill="#44454d"/></svg>
<svg style="position:absolute;left:1890.0px;top:595.5px;" width="18" height="18" viewBox="0 0 18 18"><path d="M2 1.500h11v11h-11zM2 4.500h11M2 7.500h11M5.500 1.500v11" fill="#fbfbfd" stroke="#9d9da5" stroke-width="0.900"/><rect x="8" y="9.500" width="9" height="7" rx="1" fill="#33343a"/><rect x="10.500" y="8.300" width="3.500" height="2" fill="#33343a"/><circle cx="12.500" cy="13" r="2" fill="#c9c9d1"/></svg>
<svg style="position:absolute;left:1890.0px;top:622.0px;" width="18" height="18" viewBox="0 0 18 18"><path d="M1.500 6l4-4h11v9l-4 5.500h-10z" fill="#7fc7e6" fill-opacity="0.750" stroke="#4fa9d1" stroke-width="0.900"/><path d="M1.500 6l11 1 4-5M12.500 7v9.500M2.500 16l3.500-5.500 10.500 0.500M6 10.500l-0.500-8.500" fill="none" stroke="#3f96be" stroke-width="0.800"/><path d="M2.500 16.500l3.500-6 6.500 6z" fill="#4fa9d1" fill-opacity="0.600"/></svg>
<svg style="position:absolute;left:1890.0px;top:649.0px;" width="18" height="18" viewBox="0 0 18 18"><path d="M2 15.500l4-12h11l-4 12z" fill="url(#rp)" stroke="#a9c3cd" stroke-width="0.600"/><path d="M2 15.500l15-12" stroke="#1f5f86" stroke-width="1.400"/><path d="M8 15.500h5l4-12" stroke="#55565e" stroke-width="0.900" stroke-dasharray="1 1.200" fill="none"/></svg>
<svg style="position:absolute;left:1906px;top:663.5px;" width="4" height="4" viewBox="0 0 4 4"><path d="M4 0v4h-4z" fill="#44454d"/></svg>
<svg style="position:absolute;left:1890.0px;top:676.5px;" width="18" height="18" viewBox="0 0 18 18"><g stroke="#8a7030" stroke-width="1.300"><path d="M1.500 1.500l3.500 3.500M5 1.500l-3.500 3.500M10.500 0.500l-1.500 3.500M8 6.500l-1.500 3.500M5.500 12.500l-1.500 3.500"/></g><path d="M7.500 12.500h8M11.500 8v8" stroke="#33343a" stroke-width="1"/><path d="M11.500 7l-1.300 2h2.600zM16.500 12.500l-2-1.300v2.600z" fill="#33343a"/></svg>
<svg style="position:absolute;left:1906px;top:691.0px;" width="4" height="4" viewBox="0 0 4 4"><path d="M4 0v4h-4z" fill="#44454d"/></svg>
<div style="position:absolute;left:1888px;top:701px;width:23px;height:22.5px;background:#dcdce1;border:1px solid #c3c3ca;box-sizing:border-box;"></div>
<svg style="position:absolute;left:1890.0px;top:703.5px;" width="18" height="18" viewBox="0 0 18 18"><rect x="1" y="1.500" width="8.500" height="5.500" fill="#fdf3df" stroke="#85858d" stroke-width="0.900"/><path d="M10 4.500h6l-3.500 4.500" fill="none" stroke="#33343a" stroke-width="1.200"/><path d="M11 10l0.800-3 2.400 1.800z" fill="#33343a"/><ellipse cx="12" cy="13.500" rx="4.200" ry="2.500" fill="#f2f2f5" stroke="#33343a" stroke-width="1"/><circle cx="12" cy="13.500" r="1.300" fill="#33343a"/></svg>
<svg style="position:absolute;left:1890.0px;top:730.0px;" width="18" height="18" viewBox="0 0 18 18"><path d="M5 4.500l4 5 6-1M9 9.500l-4.500 5" stroke="#33343a" stroke-width="1.200" fill="none"/><circle cx="5" cy="4" r="2.500" fill="#6fb36a"/><circle cx="14.500" cy="8.500" r="2.500" fill="#e0737a"/><circle cx="4.500" cy="14.500" r="2.500" fill="#4a9fc4"/></svg>
<svg style="position:absolute;left:1890.0px;top:755.5px;" width="18" height="18" viewBox="0 0 18 18"><path d="M9 2.500l-7 12.500h10" fill="none" stroke="#b9b9c1" stroke-width="2.400" stroke-linejoin="round"/><path d="M9 2.500l6 10.500" stroke="#b9b9c1" stroke-width="2.400"/><path d="M11.500 11.500l5.500 3-5.500 3z" fill="#e8e8ec" stroke="#b9b9c1" stroke-width="0.800"/></svg>
<svg style="position:absolute;left:1890.0px;top:781.0px;" width="18" height="18" viewBox="0 0 18 18"><rect x="3.500" y="3.500" width="3.800" height="11" fill="#b5b5bd"/><rect x="10.500" y="3.500" width="3.800" height="11" fill="#b5b5bd"/></svg>
<svg style="position:absolute;left:1890.0px;top:806.5px;" width="18" height="18" viewBox="0 0 18 18"><path d="M1.500 4.500h15v10h-9.500c0-3-2-5.500-5.500-5.500z" fill="url(#gg2)" stroke="#cfcfd6" stroke-width="0.600"/></svg>
<svg style="position:absolute;left:95.5px;top:1059.7px;" width="6" height="6" viewBox="0 0 6 6"><circle cx="3" cy="3" r="2.500" fill="#1e6a86"/></svg>
<div style="position:absolute;left:1737px;top:1052.5px;width:165px;height:22.5px;background:#f3f3f6;border:1px solid #b4b4bc;box-sizing:border-box;"></div>
<div style="position:absolute;left:1886.5px;top:1053.5px;width:1px;height:20.5px;background:#b4b4bc;"></div>
<svg style="position:absolute;left:1889px;top:1061px;" width="10" height="6" viewBox="0 0 10 6"><path d="M0.5 0h8L4.5 5z" fill="#444"/></svg>
<div style="position:absolute;left:6px;top:1052.2px;width:22px;height:23.6px;background:#e0e0e5;border:1px solid #b9b9c1;box-sizing:border-box;"></div>
<svg style="position:absolute;left:8.5px;top:1056px;" width="18" height="17" viewBox="0 0 18 17"><defs><linearGradient id="lp" x1="0" y1="0" x2="0" y2="1"><stop offset="0" stop-color="#6fa8dc"/><stop offset="1" stop-color="#e4ecf6"/></linearGradient></defs><rect x="1" y="0.800" width="14.500" height="14" fill="#fbfbfd" stroke="#a9a9b1" stroke-width="1"/><path d="M1 3.300h14.500" stroke="#a9a9b1" stroke-width="1.200"/><rect x="1" y="4.300" width="4.300" height="10.500" fill="url(#lp)" stroke="#4a86c4" stroke-width="0.900"/><ellipse cx="12.300" cy="13.300" rx="4.200" ry="2.500" fill="#f2f2f5" stroke="#33343a" stroke-width="1"/><circle cx="12.300" cy="13.300" r="1.300" fill="#33343a"/></svg>
<svg style="position:absolute;left:34px;top:1054.5px;" width="18" height="18" viewBox="0 0 18 18"><defs><radialGradient id="gl" cx="0.400" cy="0.350" r="0.700"><stop offset="0" stop-color="#c8ecfa"/><stop offset="1" stop-color="#2a8ac2"/></radialGradient></defs><circle cx="9" cy="9.500" r="6" fill="url(#gl)"/><path d="M5 6.500c1.500-1 3-1 4 0.500s-1.500 2.500-0.500 4 2.500 0 3.500 1.500M11 4.500c1 1 2.500 1.500 3.500 1" fill="none" stroke="#e4f5fc" stroke-width="1.100"/><ellipse cx="9" cy="9.500" rx="9" ry="3.300" transform="rotate(-38 9 9.500)" fill="none" stroke="#55565e" stroke-width="1.100"/></svg>
<svg style="position:absolute;left:61px;top:1056px;" width="16" height="16" viewBox="0 0 16 16"><defs><linearGradient id="wn" x1="0" y1="0" x2="0" y2="1"><stop offset="0" stop-color="#ffffff"/><stop offset="1" stop-color="#cfe2f0"/></linearGradient></defs><rect x="0.800" y="0.800" width="14.500" height="14.500" rx="0.800" fill="url(#wn)" stroke="#4a8fc6" stroke-width="1.100"/></svg>
<div style="position:absolute;left:88.5px;top:1052px;width:1px;height:23px;background:#c4c4ca;"></div>
<div style="position:absolute;left:1532px;top:1051px;width:1px;height:24px;background:#b5b5bd;"></div>
<div style="position:absolute;left:1537px;top:1051px;width:1px;height:24px;background:#b5b5bd;"></div>
<svg style="position:absolute;left:1544px;top:1056px;" width="18" height="16" viewBox="0 0 18 16"><defs><linearGradient id="bn" x1="0" y1="0" x2="1" y2="0"><stop offset="0" stop-color="#2a2a30"/><stop offset="0.500" stop-color="#8d8d95"/><stop offset="1" stop-color="#2a2a30"/></linearGradient></defs><path d="M1 15l1.500-9 1.500-4h3l1 4v9zM9.500 15v-9l1-4h3l1.500 4 1.500 9z" fill="url(#bn)"/><rect x="7" y="4.500" width="3.500" height="4" fill="#44454d"/></svg>
<svg style="position:absolute;left:1566px;top:1061.5px;" width="8" height="5" viewBox="0 0 8 5"><path d="M0 0h8L4 4.600z" fill="#55565e"/></svg>
<div style="position:absolute;left:1580px;top:1051px;width:1px;height:24px;background:#c4c4ca;"></div>
<svg style="position:absolute;left:1587px;top:1056.5px;" width="16" height="13" viewBox="0 0 16 13"><rect x="0.800" y="0.800" width="14" height="10.500" fill="none" stroke="#33343a" stroke-width="1.200" stroke-dasharray="3 1.800"/></svg>
<svg style="position:absolute;left:1609px;top:1061.5px;" width="8" height="5" viewBox="0 0 8 5"><path d="M0 0h8L4 4.600z" fill="#55565e"/></svg>
<svg style="position:absolute;left:1626.5px;top:1055.5px;" width="18" height="17" viewBox="0 0 18 17"><rect x="0.800" y="0.800" width="15.500" height="15" fill="#cdeefa" stroke="#1f6f98" stroke-width="1.100" stroke-dasharray="2.500 1.500"/><ellipse cx="6.500" cy="5.500" rx="3.600" ry="2.200" fill="#fff" stroke="#55565e" stroke-width="0.900"/><circle cx="6.500" cy="5.500" r="1" fill="#33343a"/><path d="M9.500 7.500v8l2-1.800 1.300 2.800 1.400-0.700-1.300-2.700h2.600z" fill="#fff" stroke="#33343a" stroke-width="0.800"/></svg>
<span class="t" style="left:784.0px;top:4.5px;font-size:13px;color:#2b2b2b;transform:scaleX(0.8970);">PAT_INST_COUNT_PARAM_DEMO1</span>
<span class="t" style="left:986.8px;top:4.5px;font-size:13px;color:#2b2b2b;transform:scaleX(0.9884);">(Active) - Creo Parametric</span>
<span class="t" style="left:29.0px;top:3.2px;font-size:16.5px;color:#484d53;transform:scaleX(1.1399);-webkit-text-stroke:0.45px #484d53;">creo</span>
<span class="t" style="left:20.0px;top:35.5px;font-size:13.5px;color:#ffffff;transform:scaleX(0.8592);">File</span>
<span class="t" style="left:82.3px;top:35.5px;font-size:13.5px;color:#4f9a2c;transform:scaleX(1.0250);">Model</span>
<span class="t" style="left:167.0px;top:35.5px;font-size:13.5px;color:#ffffff;transform:scaleX(0.9089);">Analysis</span>
<span class="t" style="left:260.0px;top:35.5px;font-size:13.5px;color:#ffffff;transform:scaleX(0.9566);">Annotate</span>
<span class="t" style="left:359.0px;top:35.5px;font-size:13.5px;color:#ffffff;transform:scaleX(0.9741);">Tools</span>
<span class="t" style="left:437.0px;top:35.5px;font-size:13.5px;color:#ffffff;transform:scaleX(0.9300);">View</span>
<span class="t" style="left:511.0px;top:35.5px;font-size:13.5px;color:#ffffff;transform:scaleX(0.9775);">Flexible Modeling</span>
<span class="t" style="left:661.0px;top:35.5px;font-size:13.5px;color:#ffffff;transform:scaleX(0.9712);">Applications</span>
<span class="t" style="left:1904.8px;top:32.3px;font-size:15.5px;color:#ffffff;transform:scaleX(0.7815);font-weight:bold;">?</span>
<span class="t" style="left:40.3px;top:142.7px;font-size:12px;color:#242424;transform:scaleX(0.9829);">Operations</span>
<span class="t" style="left:194.3px;top:142.7px;font-size:12px;color:#242424;transform:scaleX(0.9244);">Get Data</span>
<span class="t" style="left:345.0px;top:142.7px;font-size:12px;color:#242424;transform:scaleX(0.9759);">Body</span>
<span class="t" style="left:519.3px;top:142.7px;font-size:12px;color:#242424;">Datum</span>
<span class="t" style="left:702.0px;top:142.7px;font-size:12px;color:#242424;transform:scaleX(0.9090);">Shapes</span>
<span class="t" style="left:844.3px;top:142.7px;font-size:12px;color:#242424;transform:scaleX(0.9740);">Engineering</span>
<span class="t" style="left:1119.3px;top:142.7px;font-size:12px;color:#242424;transform:scaleX(0.9917);">Editing</span>
<span class="t" style="left:1365.3px;top:142.7px;font-size:12px;color:#242424;transform:scaleX(0.9164);">Surfaces</span>
<span class="t" style="left:1468.3px;top:142.7px;font-size:12px;color:#242424;transform:scaleX(1.0205);">Model Intent</span>
<span class="t" style="left:7.1px;top:102.7px;font-size:12px;color:#242424;transform:scaleX(0.9359);">Regenerate</span>
<span class="t" style="left:94.3px;top:61.7px;font-size:12px;color:#a9a9b0;transform:scaleX(0.9780);">Copy</span>
<span class="t" style="left:94.5px;top:88.7px;font-size:12px;color:#a9a9b0;transform:scaleX(0.8864);">Paste</span>
<span class="t" style="left:94.5px;top:114.7px;font-size:12px;color:#a9a9b0;transform:scaleX(0.9168);">Delete</span>
<span class="t" style="left:176.0px;top:61.7px;font-size:12px;color:#242424;transform:scaleX(0.9645);">User-Defined Feature</span>
<span class="t" style="left:176.0px;top:88.7px;font-size:12px;color:#242424;transform:scaleX(0.9877);">Copy Geometry</span>
<span class="t" style="left:176.0px;top:114.7px;font-size:12px;color:#242424;transform:scaleX(0.9778);">Shrinkwrap</span>
<span class="t" style="left:322.0px;top:61.7px;font-size:12px;color:#242424;transform:scaleX(0.9804);">Boolean Operations</span>
<span class="t" style="left:322.0px;top:88.7px;font-size:12px;color:#242424;transform:scaleX(1.0049);">Split/Trim Body</span>
<span class="t" style="left:322.0px;top:114.7px;font-size:12px;color:#242424;transform:scaleX(0.9871);">New Body</span>
<span class="t" style="left:442.3px;top:102.7px;font-size:12px;color:#242424;transform:scaleX(0.9348);">Plane</span>
<span class="t" style="left:501.0px;top:61.7px;font-size:12px;color:#242424;transform:scaleX(0.9571);">Axis</span>
<span class="t" style="left:501.0px;top:88.7px;font-size:12px;color:#242424;transform:scaleX(1.0234);">Point</span>
<span class="t" style="left:501.0px;top:114.7px;font-size:12px;color:#242424;transform:scaleX(0.9770);">Coordinate System</span>
<span class="t" style="left:609.0px;top:102.7px;font-size:12px;color:#242424;transform:scaleX(0.9267);">Sketch</span>
<span class="t" style="left:659.1px;top:102.7px;font-size:12px;color:#242424;transform:scaleX(0.9599);">Extrude</span>
<span class="t" style="left:727.0px;top:61.7px;font-size:12px;color:#242424;transform:scaleX(0.9456);">Revolve</span>
<span class="t" style="left:727.0px;top:88.7px;font-size:12px;color:#242424;transform:scaleX(0.9182);">Sweep</span>
<span class="t" style="left:727.0px;top:114.7px;font-size:12px;color:#242424;transform:scaleX(0.9601);">Swept Blend</span>
<span class="t" style="left:827.3px;top:61.7px;font-size:12px;color:#242424;">Hole</span>
<span class="t" style="left:827.3px;top:88.7px;font-size:12px;color:#242424;transform:scaleX(0.9724);">Round</span>
<span class="t" style="left:827.3px;top:114.7px;font-size:12px;color:#242424;transform:scaleX(0.9931);">Chamfer</span>
<span class="t" style="left:915.0px;top:61.7px;font-size:12px;color:#242424;">Draft</span>
<span class="t" style="left:915.0px;top:88.7px;font-size:12px;color:#242424;transform:scaleX(0.9255);">Shell</span>
<span class="t" style="left:915.0px;top:114.7px;font-size:12px;color:#242424;transform:scaleX(0.9270);">Rib</span>
<span class="t" style="left:970.3px;top:102.7px;font-size:12px;color:#242424;transform:scaleX(0.9663);">Pattern</span>
<span class="t" style="left:1036.3px;top:61.7px;font-size:12px;color:#a9a9b0;transform:scaleX(1.0438);">Mirror</span>
<span class="t" style="left:1036.3px;top:88.7px;font-size:12px;color:#242424;transform:scaleX(0.9343);">Trim</span>
<span class="t" style="left:1036.3px;top:114.7px;font-size:12px;color:#a9a9b0;transform:scaleX(0.9907);">Merge</span>
<span class="t" style="left:1098.3px;top:61.7px;font-size:12px;color:#a9a9b0;transform:scaleX(0.9476);">Extend</span>
<span class="t" style="left:1098.3px;top:88.7px;font-size:12px;color:#242424;transform:scaleX(0.9875);">Offset</span>
<span class="t" style="left:1098.3px;top:114.7px;font-size:12px;color:#242424;transform:scaleX(0.9646);">Intersect</span>
<span class="t" style="left:1171.0px;top:61.7px;font-size:12px;color:#242424;transform:scaleX(0.9824);">Project</span>
<span class="t" style="left:1171.0px;top:88.7px;font-size:12px;color:#a9a9b0;transform:scaleX(0.9683);">Thicken</span>
<span class="t" style="left:1171.0px;top:114.7px;font-size:12px;color:#242424;">Solidify</span>
<span class="t" style="left:1240.3px;top:61.7px;font-size:12px;color:#242424;transform:scaleX(0.9555);">Remove</span>
<span class="t" style="left:1240.3px;top:88.7px;font-size:12px;color:#242424;transform:scaleX(0.9596);">Split</span>
<span class="t" style="left:1240.3px;top:114.7px;font-size:12px;color:#242424;transform:scaleX(0.9573);">Unify Surfaces</span>
<span class="t" style="left:1330.2px;top:102.7px;font-size:12px;color:#242424;transform:scaleX(0.9869);">Boundary</span>
<span class="t" style="left:1340.3px;top:117.7px;font-size:12px;color:#242424;transform:scaleX(0.9576);">Blend</span>
<span class="t" style="left:1409.3px;top:61.7px;font-size:12px;color:#242424;transform:scaleX(0.9394);">Fill</span>
<span class="t" style="left:1409.3px;top:88.7px;font-size:12px;color:#242424;transform:scaleX(0.9255);">Style</span>
<span class="t" style="left:1409.3px;top:114.7px;font-size:12px;color:#242424;transform:scaleX(0.9259);">Freestyle</span>
<span class="t" style="left:1475.3px;top:102.7px;font-size:12px;color:#242424;transform:scaleX(1.0218);">Component</span>
<span class="t" style="left:1484.0px;top:117.7px;font-size:12px;color:#242424;transform:scaleX(0.9849);">Interface</span>
<span class="t" style="left:31.3px;top:254.0px;font-size:11.5px;color:#2a2a2a;transform:scaleX(0.8808);">PAT_INST_COUNT_PARAM_DEMO1.PRT</span>
<span class="t" style="left:51.6px;top:272.0px;font-size:11.5px;color:#2a2a2a;transform:scaleX(0.9715);">Design Items</span>
<span class="t" style="left:71.5px;top:290.0px;font-size:11.5px;color:#2a2a2a;transform:scaleX(0.9924);">Materials</span>
<span class="t" style="left:71.5px;top:308.0px;font-size:11.5px;color:#2a2a2a;transform:scaleX(0.9195);">Bodies (1)</span>
<span class="t" style="left:71.5px;top:326.0px;font-size:11.5px;color:#2a2a2a;transform:scaleX(1.0387);">Annotations</span>
<span class="t" style="left:91.8px;top:344.0px;font-size:11.5px;color:#2a2a2a;transform:scaleX(0.9247);">Note_1</span>
<span class="t" style="left:91.8px;top:362.0px;font-size:11.5px;color:#2a2a2a;transform:scaleX(0.9463);">Note_2</span>
<span class="t" style="left:91.8px;top:380.0px;font-size:11.5px;color:#2a2a2a;transform:scaleX(0.9463);">Note_3</span>
<span class="t" style="left:91.8px;top:398.0px;font-size:11.5px;color:#2a2a2a;transform:scaleX(0.9463);">Note_7</span>
<span class="t" style="left:91.8px;top:416.0px;font-size:11.5px;color:#2a2a2a;transform:scaleX(1.0163);">gp0</span>
<span class="t" style="left:91.8px;top:434.0px;font-size:11.5px;color:#2a2a2a;transform:scaleX(1.0163);">gp2</span>
<span class="t" style="left:91.8px;top:452.0px;font-size:11.5px;color:#2a2a2a;transform:scaleX(0.9345);">Datum_Tag_A</span>
<span class="t" style="left:91.8px;top:470.0px;font-size:11.5px;color:#2a2a2a;transform:scaleX(0.9276);">Datum_Tag_B</span>
<span class="t" style="left:91.8px;top:488.0px;font-size:11.5px;color:#2a2a2a;transform:scaleX(0.9263);">Datum_Tag_C</span>
<span class="t" style="left:71.5px;top:506.0px;font-size:11.5px;color:#2a2a2a;transform:scaleX(0.9444);">Unused DRFs</span>
<span class="t" style="left:51.6px;top:524.0px;font-size:11.5px;color:#2a2a2a;transform:scaleX(0.8524);">RIGHT</span>
<span class="t" style="left:51.6px;top:542.0px;font-size:11.5px;color:#2a2a2a;transform:scaleX(0.8192);">TOP</span>
<span class="t" style="left:51.6px;top:560.0px;font-size:11.5px;color:#2a2a2a;transform:scaleX(0.8685);">FRONT</span>
<span class="t" style="left:51.6px;top:578.0px;font-size:11.5px;color:#2a2a2a;transform:scaleX(0.8053);">PRT_CSYS_DEF</span>
<span class="t" style="left:51.6px;top:596.0px;font-size:11.5px;color:#2a2a2a;transform:scaleX(0.9424);">Extrude 1</span>
<span class="t" style="left:51.6px;top:614.0px;font-size:11.5px;color:#2a2a2a;transform:scaleX(0.9406);">Chamfer 1</span>
<span class="t" style="left:51.6px;top:632.0px;font-size:11.5px;color:#2a2a2a;transform:scaleX(0.9833);">Pattern 2 of Pattern 1</span>
<span class="t" style="left:324.0px;top:974.0px;font-size:15px;color:#3b2a62;transform:scaleX(0.9840);">ASME Y14.5-2018</span>
<span class="t" style="left:324.0px;top:999.7px;font-size:15px;color:#3b2a62;transform:scaleX(0.9901);">ASME Y14.41-2019</span>
<span class="t" style="left:324.0px;top:1026.0px;font-size:15px;color:#3b2a62;transform:scaleX(0.9879);">ALL DIMENSIONS SPECIFIED IN MILLIMETERS</span>
<span class="t" style="left:1794.7px;top:979.0px;font-size:14px;color:#a9a9ad;transform:scaleX(0.8389);">X.X +-0.1</span>
<span class="t" style="left:1786.6px;top:994.0px;font-size:14px;color:#a9a9ad;transform:scaleX(0.8618);">X.XX +-0.01</span>
<span class="t" style="left:1780.0px;top:1008.7px;font-size:14px;color:#a9a9ad;transform:scaleX(0.8708);">X.XXX +-0.001</span>
<span class="t" style="left:1784.0px;top:1022.5px;font-size:14px;color:#a9a9ad;transform:scaleX(0.8761);">ANG. +-0.5</span>
<span class="t" style="left:106.0px;top:1053.0px;font-size:11.5px;color:#2a2a2a;transform:scaleX(0.9321);">12:48 Part '</span>
<span class="t" style="left:160.9px;top:1053.0px;font-size:11.5px;color:#2a2a2a;transform:scaleX(0.8926);">PAT_INST_COUNT_PARAM_DEMO1</span>
<span class="t" style="left:334.8px;top:1053.0px;font-size:11.5px;color:#2a2a2a;transform:scaleX(1.0152);">' not changed since last regen.</span>
<span class="t" style="left:1745.2px;top:1053.7px;font-size:12.5px;color:#2a2a2a;transform:scaleX(0.9419);">Geometry</span>
</body></html>
